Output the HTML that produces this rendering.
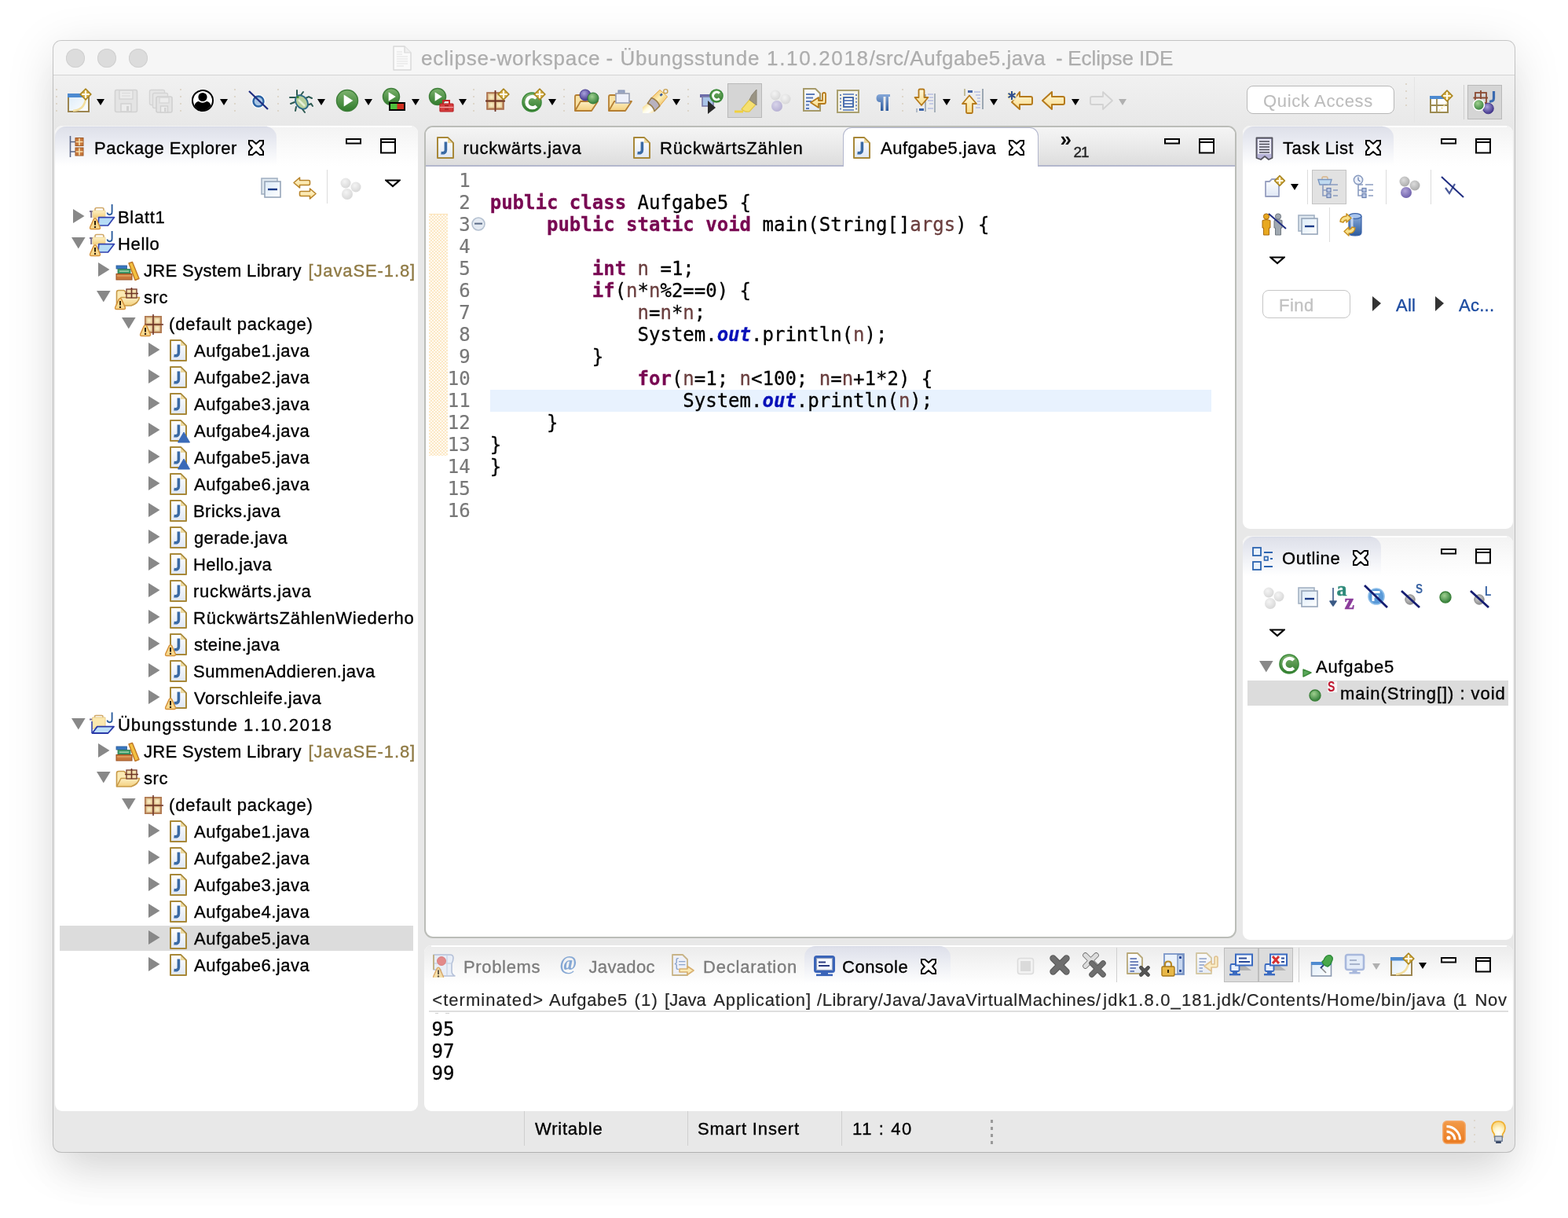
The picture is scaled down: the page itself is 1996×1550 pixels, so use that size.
<!DOCTYPE html>
<html lang="de"><head><meta charset="utf-8"><title>Eclipse IDE</title>
<style>
html,body{margin:0;padding:0;background:#fff;}
body{width:1996px;height:1550px;overflow:hidden;position:relative;font-family:"Liberation Sans",sans-serif;}
#win{position:absolute;left:68px;top:52px;width:1860px;height:1414px;border-radius:10px;background:#e8e8e8;
 box-shadow:0 0 0 1px rgba(0,0,0,.20),0 40px 50px -12px rgba(0,0,0,.065),0 12px 62px rgba(0,0,0,.13);overflow:hidden;}
#pg{position:absolute;left:-68px;top:-52px;width:1996px;height:1550px;will-change:transform;}
#pg div,#pg span,#pg svg{position:absolute;}
.t{white-space:pre;font-family:"Liberation Sans",sans-serif;}
.m{font-family:"DejaVu Sans Mono","Liberation Mono",monospace;}
.cl{font-size:24px;line-height:28px;color:#000;-webkit-text-stroke:0.3px #000;}
.cl b{font-weight:normal;}
.cl .k{font-weight:bold;color:#780852;-webkit-text-stroke-color:#780852;}
.cl .v{color:#6a3e3e;-webkit-text-stroke-color:#6a3e3e;}
.cl .f{font-weight:bold;font-style:italic;color:#0810b8;-webkit-text-stroke-color:#0810b8;}
</style></head>
<body>
<svg width="0" height="0" style="position:absolute"><defs>
<linearGradient id="gGreen" x1="0" y1="0" x2="0" y2="1"><stop offset="0" stop-color="#7db36f"/><stop offset="1" stop-color="#2f7a2b"/></linearGradient>
<linearGradient id="gYel" x1="0" y1="0" x2="0" y2="1"><stop offset="0" stop-color="#fff8dc"/><stop offset="1" stop-color="#f9dc8a"/></linearGradient>
<linearGradient id="gFold" x1="0" y1="0" x2="0" y2="1"><stop offset="0" stop-color="#fdf0c4"/><stop offset="1" stop-color="#f3cf7c"/></linearGradient>
<linearGradient id="gPage" x1="0" y1="0" x2="0" y2="1"><stop offset="0" stop-color="#ffffff"/><stop offset="1" stop-color="#dfe7f5"/></linearGradient>
<linearGradient id="gPkg" x1="0" y1="0" x2="1" y2="1"><stop offset="0" stop-color="#d9b88a"/><stop offset="1" stop-color="#bf8f62"/></linearGradient>
<radialGradient id="gCell" cx="0.5" cy="0.5" r="0.7"><stop offset="0" stop-color="#fbf1c8"/><stop offset="1" stop-color="#e3c795"/></radialGradient>
<linearGradient id="gBlueB" x1="0" y1="0" x2="0" y2="1"><stop offset="0" stop-color="#8f86c8"/><stop offset="1" stop-color="#3d2f86"/></linearGradient>
<linearGradient id="gWin" x1="0" y1="0" x2="1" y2="1"><stop offset="0" stop-color="#dcebf8"/><stop offset="1" stop-color="#ffffff"/></linearGradient>
<linearGradient id="gGray" x1="0" y1="0" x2="0" y2="1"><stop offset="0" stop-color="#f0f0f0"/><stop offset="1" stop-color="#d4d4d4"/></linearGradient>
<linearGradient id="gBlue2" x1="0" y1="0" x2="0" y2="1"><stop offset="0" stop-color="#86a8d8"/><stop offset="1" stop-color="#2c5a9c"/></linearGradient>
<radialGradient id="gBallG" cx="0.4" cy="0.35" r="0.7"><stop offset="0" stop-color="#9fd08f"/><stop offset="1" stop-color="#2d7a35"/></radialGradient>
<radialGradient id="gBallB" cx="0.4" cy="0.35" r="0.7"><stop offset="0" stop-color="#a9a2dc"/><stop offset="1" stop-color="#3a2d85"/></radialGradient>
<radialGradient id="gBallD" cx="0.4" cy="0.35" r="0.7"><stop offset="0" stop-color="#f4f4f4"/><stop offset="1" stop-color="#d6d6d6"/></radialGradient>
<radialGradient id="gBallP" cx="0.4" cy="0.35" r="0.7"><stop offset="0" stop-color="#d8d4ea"/><stop offset="1" stop-color="#b4aed2"/></radialGradient>
<radialGradient id="gBallGr" cx="0.4" cy="0.35" r="0.7"><stop offset="0" stop-color="#d0d0d0"/><stop offset="1" stop-color="#8c8c8c"/></radialGradient>
<radialGradient id="gBallPu" cx="0.4" cy="0.35" r="0.7"><stop offset="0" stop-color="#b0a4d8"/><stop offset="1" stop-color="#6a5ca8"/></radialGradient>
</defs></svg>
<div id="win"><div id="pg">
<div style="left:68px;top:52px;width:1860px;height:44px;background:#f6f6f6;border-bottom:1px solid #d4d4d4;box-sizing:border-box;"></div>
<div style="left:84px;top:62px;width:24px;height:24px;border-radius:50%;background:#dcdcdc;box-shadow:inset 0 0 0 1px #d0d0d0;"></div>
<div style="left:124px;top:62px;width:24px;height:24px;border-radius:50%;background:#dcdcdc;box-shadow:inset 0 0 0 1px #d0d0d0;"></div>
<div style="left:164px;top:62px;width:24px;height:24px;border-radius:50%;background:#dcdcdc;box-shadow:inset 0 0 0 1px #d0d0d0;"></div>
<svg style="left:500px;top:58px;" width="24" height="32" viewBox="0 0 24 32"><path d="M1 1H15L23 9V31H1Z" fill="#fafafa" stroke="#d8d8d8" stroke-width="1.4" stroke-linejoin="round"/><path d="M15 1V9H23" fill="#f0f0f0" stroke="#d8d8d8" stroke-width="1.2"/><path d="M5 8H12M5 11H12M5 14H19M5 17H19M5 20H19M5 23H19M5 26H14" stroke="#e2e2e2" stroke-width="1.2"/></svg>
<span class="t" style="left:536.00px;top:58px;font-size:26px;line-height:32px;color:#adadad;letter-spacing:0.850px;-webkit-text-stroke:0.25px #adadad;">eclipse-workspace </span>
<span class="t" style="left:771.60px;top:58px;font-size:26px;line-height:32px;color:#adadad;-webkit-text-stroke:0.25px #adadad;">- </span>
<span class="t" style="left:789.40px;top:58px;font-size:26px;line-height:32px;color:#adadad;letter-spacing:0.853px;-webkit-text-stroke:0.25px #adadad;">Übungsstunde </span>
<span class="t" style="left:976.00px;top:58px;font-size:26px;line-height:32px;color:#adadad;letter-spacing:1.674px;-webkit-text-stroke:0.25px #adadad;">1.10.2018</span>
<span class="t" style="left:1106.70px;top:58px;font-size:26px;line-height:32px;color:#adadad;letter-spacing:0.512px;-webkit-text-stroke:0.25px #adadad;">/src/Aufgabe5.java </span>
<span class="t" style="left:1344.00px;top:58px;font-size:26px;line-height:32px;color:#adadad;-webkit-text-stroke:0.25px #adadad;">- </span>
<span class="t" style="left:1359.30px;top:58px;font-size:26px;line-height:32px;color:#adadad;letter-spacing:-0.034px;-webkit-text-stroke:0.25px #adadad;">Eclipse IDE</span>
<div style="left:68px;top:96px;width:1860px;height:64px;background:linear-gradient(#f1f1f1,#e8e8e8);"></div>
<div style="left:71px;top:113px;width:2px;height:2px;background:#ddd6ca;"></div>
<div style="left:71px;top:122px;width:2px;height:2px;background:#ddd6ca;"></div>
<div style="left:71px;top:131px;width:2px;height:2px;background:#ddd6ca;"></div>
<div style="left:71px;top:140px;width:2px;height:2px;background:#ddd6ca;"></div>
<div style="left:229px;top:113px;width:2px;height:2px;background:#ddd6ca;"></div>
<div style="left:229px;top:122px;width:2px;height:2px;background:#ddd6ca;"></div>
<div style="left:229px;top:131px;width:2px;height:2px;background:#ddd6ca;"></div>
<div style="left:229px;top:140px;width:2px;height:2px;background:#ddd6ca;"></div>
<div style="left:298px;top:113px;width:2px;height:2px;background:#ddd6ca;"></div>
<div style="left:298px;top:122px;width:2px;height:2px;background:#ddd6ca;"></div>
<div style="left:298px;top:131px;width:2px;height:2px;background:#ddd6ca;"></div>
<div style="left:298px;top:140px;width:2px;height:2px;background:#ddd6ca;"></div>
<div style="left:353px;top:113px;width:2px;height:2px;background:#ddd6ca;"></div>
<div style="left:353px;top:122px;width:2px;height:2px;background:#ddd6ca;"></div>
<div style="left:353px;top:131px;width:2px;height:2px;background:#ddd6ca;"></div>
<div style="left:353px;top:140px;width:2px;height:2px;background:#ddd6ca;"></div>
<div style="left:602px;top:113px;width:2px;height:2px;background:#ddd6ca;"></div>
<div style="left:602px;top:122px;width:2px;height:2px;background:#ddd6ca;"></div>
<div style="left:602px;top:131px;width:2px;height:2px;background:#ddd6ca;"></div>
<div style="left:602px;top:140px;width:2px;height:2px;background:#ddd6ca;"></div>
<div style="left:717px;top:113px;width:2px;height:2px;background:#ddd6ca;"></div>
<div style="left:717px;top:122px;width:2px;height:2px;background:#ddd6ca;"></div>
<div style="left:717px;top:131px;width:2px;height:2px;background:#ddd6ca;"></div>
<div style="left:717px;top:140px;width:2px;height:2px;background:#ddd6ca;"></div>
<div style="left:875px;top:113px;width:2px;height:2px;background:#ddd6ca;"></div>
<div style="left:875px;top:122px;width:2px;height:2px;background:#ddd6ca;"></div>
<div style="left:875px;top:131px;width:2px;height:2px;background:#ddd6ca;"></div>
<div style="left:875px;top:140px;width:2px;height:2px;background:#ddd6ca;"></div>
<div style="left:1148px;top:113px;width:2px;height:2px;background:#ddd6ca;"></div>
<div style="left:1148px;top:122px;width:2px;height:2px;background:#ddd6ca;"></div>
<div style="left:1148px;top:131px;width:2px;height:2px;background:#ddd6ca;"></div>
<div style="left:1148px;top:140px;width:2px;height:2px;background:#ddd6ca;"></div>
<div style="left:1789px;top:106px;width:2px;height:2px;background:#ddd6ca;"></div>
<div style="left:1789px;top:115px;width:2px;height:2px;background:#ddd6ca;"></div>
<div style="left:1789px;top:124px;width:2px;height:2px;background:#ddd6ca;"></div>
<div style="left:1789px;top:133px;width:2px;height:2px;background:#ddd6ca;"></div>
<div style="left:926px;top:106px;width:44px;height:44px;background:#d5d5d5;border:1.5px solid #b9b9b9;box-sizing:border-box;"></div>
<div style="left:1868px;top:108px;width:44px;height:44px;background:#d5d5d5;border:1.5px solid #b9b9b9;box-sizing:border-box;"></div>
<div style="left:1800px;top:98px;width:1px;height:58px;background:#e5e5e5;"></div>
<div style="left:1863px;top:108px;width:1px;height:44px;background:#cfcfcf;"></div>
<svg style="left:85px;top:112px;overflow:visible;" width="32" height="32" viewBox="0 0 32 32"><rect x="2" y="8" width="26" height="22" fill="url(#gWin)" stroke="#9c8550" stroke-width="2"/><rect x="1" y="7" width="22" height="5" fill="#4d8ad0"/><path d="M8 29Q22 28 24 14" fill="none" stroke="#f3dfa0" stroke-width="2.5"/><path d="M24 1L31 8L24 15L17 8Z" fill="#d2ab45" stroke="#a8841f" stroke-width="1.4" stroke-linejoin="round"/><path d="M24 4V12M20 8H28" stroke="#fffbe8" stroke-width="2.2" stroke-linecap="round"/></svg>
<svg style="left:145px;top:112px;overflow:visible;" width="32" height="32" viewBox="0 0 32 32"><rect x="1.5" y="2.5" width="28" height="28" rx="2" fill="#e4e4e4" stroke="#d2d2d2" stroke-width="1.6"/><rect x="7" y="3" width="17" height="11" fill="#ebebeb" stroke="#d4d4d4" stroke-width="1.4"/><path d="M10 6.5H21M10 10H21" stroke="#dadada" stroke-width="1.2"/><rect x="9" y="20" width="13" height="10" fill="#ececec" stroke="#d0d0d0" stroke-width="1.4"/><rect x="16" y="23" width="3" height="6" fill="#d2d2d2"/></svg>
<svg style="left:189px;top:112px;overflow:visible;" width="32" height="32" viewBox="0 0 32 32"><rect x="1.5" y="2.5" width="19" height="19" rx="2" fill="#e6e6e6" stroke="#d4d4d4" stroke-width="1.4"/><rect x="5.5" y="6.5" width="19" height="19" rx="2" fill="#e6e6e6" stroke="#d4d4d4" stroke-width="1.4"/><rect x="10" y="11" width="20" height="20" rx="2" fill="#e4e4e4" stroke="#d0d0d0" stroke-width="1.6"/><rect x="14" y="12" width="12" height="7" fill="#ececec" stroke="#d6d6d6" stroke-width="1.2"/><rect x="15.5" y="23" width="9" height="8" fill="#ececec" stroke="#d0d0d0" stroke-width="1.4"/><rect x="20" y="25" width="2.5" height="5" fill="#d2d2d2"/></svg>
<svg style="left:242px;top:112px;overflow:visible;" width="32" height="32" viewBox="0 0 32 32"><circle cx="16" cy="16" r="13" fill="#fff" stroke="#000" stroke-width="2"/><circle cx="16" cy="11.5" r="5.6" fill="#000"/><path d="M5.5 22.5Q6.5 17.5 11 17Q16 20.5 21 17Q25.5 17.5 26.5 22.5Q22 28.5 16 28.5Q10 28.5 5.5 22.5Z" fill="#000"/></svg>
<svg style="left:312px;top:112px;overflow:visible;" width="32" height="32" viewBox="0 0 32 32"><circle cx="17" cy="17" r="6.5" fill="#a9c6e4" stroke="#fff" stroke-width="5"/><circle cx="17" cy="17" r="6.5" fill="#a9c6e4" stroke="#2b63a4" stroke-width="2.4"/><path d="M5 4L29 27" stroke="#1f2c80" stroke-width="2.2"/></svg>
<svg style="left:367px;top:112px;overflow:visible;" width="32" height="32" viewBox="0 0 32 32"><g stroke="#2d5a52" stroke-width="2" fill="none" stroke-linecap="round"><path d="M11 3V9M19 5L16 9M2 12H9M3 20L8 18M10 24L9 29M18 27L21 31M24 22L29 20L31 23M22 13L26 11L30 13"/></g><ellipse cx="17" cy="18" rx="7" ry="9.5" transform="rotate(-38 17 18)" fill="#b7cf9c" stroke="#2d6a86" stroke-width="2"/><path d="M13 15L21 23" stroke="#e6efd8" stroke-width="2.5"/><circle cx="12" cy="11.5" r="1.6" fill="#3f8a2c"/></svg>
<svg style="left:426px;top:112px;overflow:visible;" width="32" height="32" viewBox="0 0 32 32"><circle cx="16" cy="16" r="13.5" fill="url(#gGreen)" stroke="#3f7f3a" stroke-width="1.5"/><path d="M11.7 8.6L23.4 16L11.7 23.4Z" fill="#fff"/></svg>
<svg style="left:485px;top:112px;overflow:visible;" width="32" height="32" viewBox="0 0 32 32"><circle cx="13" cy="11" r="10.5" fill="url(#gGreen)" stroke="#3f7f3a" stroke-width="1.5"/><path d="M9.6 5.2L18.8 11L9.6 16.8Z" fill="#fff"/><rect x="11" y="19" width="19" height="9" fill="#d03020" stroke="#000" stroke-width="2"/><rect x="12" y="20" width="8.5" height="7" fill="#4fc03c"/></svg>
<svg style="left:546px;top:112px;overflow:visible;" width="32" height="32" viewBox="0 0 32 32"><circle cx="11" cy="11" r="10.5" fill="url(#gGreen)" stroke="#3f7f3a" stroke-width="1.5"/><path d="M7.6 5.2L16.8 11L7.6 16.8Z" fill="#fff"/><rect x="18" y="16" width="8" height="5" fill="none" stroke="#c4282a" stroke-width="2"/><rect x="14" y="20" width="17" height="10" rx="1" fill="#d43c3c" stroke="#b81f24" stroke-width="1.2"/><path d="M14 24.5H31" stroke="#f2a0a0" stroke-width="1.4"/><path d="M20 22.5H25M20 27H25" stroke="#8f1418" stroke-width="1.2"/></svg>
<svg style="left:617px;top:112px;overflow:visible;" width="32" height="32" viewBox="0 0 32 32"><rect x="3" y="6" width="21" height="21" fill="url(#gPkg)" stroke="#a86b48" stroke-width="1.6"/><rect x="5" y="8" width="7" height="7" fill="url(#gCell)"/><rect x="15" y="8" width="7" height="7" fill="url(#gCell)"/><rect x="5" y="18" width="7" height="7" fill="url(#gCell)"/><rect x="15" y="18" width="7" height="7" fill="url(#gCell)"/><path d="M13.5 3V30M1 16.5H26" stroke="#6e3424" stroke-width="1.8"/><path d="M24 1L31 8L24 15L17 8Z" fill="#d2ab45" stroke="#a8841f" stroke-width="1.4" stroke-linejoin="round"/><path d="M24 4V12M20 8H28" stroke="#fffbe8" stroke-width="2.2" stroke-linecap="round"/></svg>
<svg style="left:663px;top:112px;overflow:visible;" width="32" height="32" viewBox="0 0 32 32"><circle cx="14" cy="18" r="12" fill="url(#gGreen)" stroke="#3c8a3a" stroke-width="1.6"/><path d="M19.8 13.0A7.2 7.2 0 1 0 19.8 23.0" fill="none" stroke="#fff" stroke-width="4.3"/><path d="M24 1L31 8L24 15L17 8Z" fill="#d2ab45" stroke="#a8841f" stroke-width="1.4" stroke-linejoin="round"/><path d="M24 4V12M20 8H28" stroke="#fffbe8" stroke-width="2.2" stroke-linecap="round"/></svg>
<svg style="left:730px;top:112px;overflow:visible;" width="32" height="32" viewBox="0 0 32 32"><g transform="translate(0 0)"><path d="M2 29V11Q2 9 4 9H10L13 12H24V17" fill="#f8e2a4" stroke="#b57f32" stroke-width="1.8" stroke-linejoin="round"/><path d="M2 29L9 17H31L23 29Z" fill="url(#gFold)" stroke="#b57f32" stroke-width="1.8" stroke-linejoin="round"/></g><circle cx="15" cy="9" r="7" fill="url(#gBallB)" stroke="#4a3f96" stroke-width="1"/><circle cx="25" cy="13" r="7" fill="url(#gBallG)" stroke="#2f7a35" stroke-width="1"/></svg>
<svg style="left:773px;top:112px;overflow:visible;" width="32" height="32" viewBox="0 0 32 32"><g transform="translate(0 0)"><path d="M2 29V11Q2 9 4 9H10L13 12H24V17" fill="#f8e2a4" stroke="#b57f32" stroke-width="1.8" stroke-linejoin="round"/><path d="M2 29L9 17H31L23 29Z" fill="url(#gFold)" stroke="#b57f32" stroke-width="1.8" stroke-linejoin="round"/></g><rect x="14" y="3" width="8" height="5" fill="#9aa6c4" stroke="#8290b4" stroke-width="1"/><rect x="11" y="7" width="17" height="12" fill="#eef0fa" stroke="#9aa0b4" stroke-width="1.6"/></svg>
<svg style="left:818px;top:112px;overflow:visible;" width="32" height="32" viewBox="0 0 32 32"><defs><linearGradient id="gBeam" x1="0" y1="0" x2="1" y2="1"><stop offset="0" stop-color="#f3c860"/><stop offset="0.45" stop-color="#fffbe0"/><stop offset="0.7" stop-color="#ffffff"/><stop offset="1" stop-color="#f6d880"/></linearGradient><linearGradient id="gTorch" x1="0" y1="0" x2="1" y2="1"><stop offset="0" stop-color="#eeb048"/><stop offset="0.5" stop-color="#fdf0b8"/><stop offset="1" stop-color="#e8a840"/></linearGradient></defs><circle cx="29.3" cy="4.2" r="2.6" fill="none" stroke="#c8a050" stroke-width="1.4"/><path d="M0 24.5L6.4 19.5L15.1 29.5L11.5 32H0Z" fill="url(#gBeam)"/><path d="M11.2 12.6L22 2.4L31.6 11L21.8 22.9Z" fill="url(#gTorch)" stroke="#e4a848" stroke-width="1"/><path d="M6.4 19.5L11.2 12.6Q18.5 15 21.8 22.9L15.1 29.5Q13.5 22.5 6.4 19.5Z" fill="#b8b2c0" stroke="#9a7c48" stroke-width="1.6" stroke-linejoin="round"/><path d="M22.4 9.8L25 7.6" stroke="#3a5a9a" stroke-width="2.6"/></svg>
<svg style="left:889px;top:112px;overflow:visible;" width="32" height="32" viewBox="0 0 32 32"><rect x="2" y="8" width="16" height="4" fill="#6a6aa8"/><rect x="5" y="11" width="14" height="12" fill="#a9c4e8" stroke="#7a7aa8" stroke-width="1.6"/><path d="M12 16L22 25L12 33Z" fill="#2a2a2a"/><circle cx="23" cy="10" r="8" fill="url(#gGreen)" stroke="#3c8a3a" stroke-width="1.6"/><path d="M26.8 6.6A4.8 4.8 0 1 0 26.8 13.4" fill="none" stroke="#fff" stroke-width="2.9"/></svg>
<svg style="left:932px;top:112px;overflow:visible;" width="32" height="32" viewBox="0 0 32 32"><path d="M3 30H14" stroke="#f0d040" stroke-width="3"/><path d="M12 27L22 15L30 21L22 30Q16 31 12 27Z" fill="#f6e070" stroke="#e4c848" stroke-width="1.2"/><path d="M22 15L25 9L31 2V22L30 21Z" fill="#9a9484" stroke="#8a8474" stroke-width="1"/></svg>
<svg style="left:976px;top:112px;overflow:visible;" width="32" height="32" viewBox="0 0 32 32"><circle cx="11" cy="9" r="6.5" fill="url(#gBallD)"/><circle cx="24" cy="14" r="6.5" fill="url(#gBallD)"/><circle cx="13" cy="23" r="7" fill="url(#gBallP)"/></svg>
<svg style="left:1021px;top:112px;overflow:visible;" width="32" height="32" viewBox="0 0 32 32"><path d="M2 1H17L23 7V29H2Z" fill="url(#gPage)" stroke="#a69a6a" stroke-width="2"/><path d="M5 8H16M5 12.5H14M5 17H12M5 21.5H9M5 26H9" stroke="#5a7ab8" stroke-width="1.8"/><path d="M28 6Q30 6 30 8V18Q30 20 28 20H21V25L11 18.5L21 12V16H26V8Q26 6 28 6Z" fill="url(#gYel)" stroke="#b57a1c" stroke-width="1.8" stroke-linejoin="round"/></svg>
<svg style="left:1064px;top:112px;overflow:visible;" width="32" height="32" viewBox="0 0 32 32"><rect x="2" y="3" width="27" height="28" fill="#f6f4ea" stroke="#aaa070" stroke-width="2"/><path d="M6 8V28M26 8V28" stroke="#5a7ab8" stroke-width="1.8" stroke-dasharray="2 2.4"/><path d="M9 8H23M9 28H23" stroke="#7a96c8" stroke-width="1.8"/><rect x="10" y="12" width="12" height="12" fill="#fff" stroke="#3a62a8" stroke-width="1.8"/><path d="M11 16H21M11 20H21" stroke="#3a62a8" stroke-width="1.6"/></svg>
<svg style="left:1110px;top:112px;overflow:visible;" width="32" height="32" viewBox="0 0 32 32"><path d="M17 8H10.5Q5.5 8 5.5 13Q5.5 18 10.5 18H11V29H14.5V11H17.5V29H21V11H23V8Z" fill="url(#gBlue2)"/></svg>
<svg style="left:1164px;top:112px;overflow:visible;" width="32" height="32" viewBox="0 0 32 32"><path d="M14 8V30M26 7V31" stroke="#7a8a9a" stroke-width="1.2"/><path d="M17 8H24M19 12H24M17 16H24M19 20H24M17 26H24" stroke="#c4cae4" stroke-width="2"/><rect x="6" y="26" width="6" height="3" fill="#3a62a8"/><path d="M3 26V31" stroke="#8a9ab0" stroke-width="1.2"/><path d="M5.5 3Q5.5 1.5 7 1.5H11Q12.5 1.5 12.5 3V12H17.5L9 22L0.5 12H5.5Z" fill="url(#gYel)" stroke="#b57a1c" stroke-width="1.8" stroke-linejoin="round"/></svg>
<svg style="left:1223.5px;top:112px;overflow:visible;" width="32" height="32" viewBox="0 0 32 32"><path d="M4 1V10" stroke="#b0a878" stroke-width="1.4"/><path d="M27 1V27" stroke="#7a8a9a" stroke-width="1.4"/><rect x="8" y="3" width="6" height="3" fill="#4a68a8"/><path d="M16 5H24M18 9H24M20 13H24M20 17H24M20 21H24M18 25H24" stroke="#c4cae4" stroke-width="2"/><path d="M6 30Q6 32 7.5 32H12.5Q14 32 14 30V20H19L10 9.5L1 20H6Z" fill="url(#gYel)" stroke="#b57a1c" stroke-width="1.8" stroke-linejoin="round"/></svg>
<svg style="left:1282px;top:112px;overflow:visible;" width="32" height="32" viewBox="0 0 32 32"><g transform="translate(4 5)"><path d="M2 13L12 0V6H26Q28 6 28 8V14Q28 16 26 16H12V22Z" fill="url(#gYel)" stroke="#b57a1c" stroke-width="2" stroke-linejoin="round"/></g><circle cx="6" cy="10" r="6" fill="#f4ecc8"/><path d="M6 4V15M1.5 6.8L10.5 12.2M10.5 6.8L1.5 12.2" stroke="#2f4f8f" stroke-width="2"/></svg>
<svg style="left:1325px;top:112px;overflow:visible;" width="32" height="32" viewBox="0 0 32 32"><g transform="translate(2 5)"><path d="M0 11L12 0V6H26Q28 6 28 8V14Q28 16 26 16H12V22Z" fill="url(#gYel)" stroke="#b57a1c" stroke-width="2" stroke-linejoin="round"/></g></svg>
<svg style="left:1386px;top:112px;overflow:visible;" width="32" height="32" viewBox="0 0 32 32"><g transform="translate(30 5) scale(-1 1)"><path d="M0 11L12 0V6H26Q28 6 28 8V14Q28 16 26 16H12V22Z" fill="#ececec" stroke="#d2d2d2" stroke-width="1.8" stroke-linejoin="round"/></g></svg>
<svg style="left:1818px;top:114px;overflow:visible;" width="32" height="32" viewBox="0 0 32 32"><rect x="3" y="9" width="22" height="20" fill="#fff" stroke="#9c8a50" stroke-width="2"/><rect x="2" y="8" width="20" height="4" fill="#4d8ad0"/><path d="M11 12V29M3 20H25" stroke="#9c8a50" stroke-width="1.8"/><path d="M14 27L24 17" stroke="#f3dfa0" stroke-width="2" stroke-dasharray="2 2"/><path d="M24 1L31 8L24 15L17 8Z" fill="#d2ab45" stroke="#a8841f" stroke-width="1.4" stroke-linejoin="round"/><path d="M24 4V12M20 8H28" stroke="#fffbe8" stroke-width="2.2" stroke-linecap="round"/></svg>
<svg style="left:1874px;top:114px;overflow:visible;" width="32" height="32" viewBox="0 0 32 32"><g stroke="#8a4a32" stroke-width="1.8" fill="none"><rect x="4" y="4" width="14" height="13"/><path d="M11 1V18M1.5 10.5H20"/></g><path d="M27.5 2V11Q27.5 15.5 22 15" fill="none" stroke="#3a6ab0" stroke-width="3.2"/><circle cx="20.5" cy="24" r="6.8" fill="url(#gBallB)" stroke="#3a2d85" stroke-width="0.8"/><circle cx="8.5" cy="19.5" r="7" fill="url(#gBallG)" stroke="#fff" stroke-width="1.6"/></svg>
<svg style="left:123px;top:126px;" width="10" height="8" viewBox="0 0 10 8"><path d="M0 0H10L5 8Z" fill="#000"/></svg>
<svg style="left:280px;top:126px;" width="10" height="8" viewBox="0 0 10 8"><path d="M0 0H10L5 8Z" fill="#000"/></svg>
<svg style="left:404px;top:126px;" width="10" height="8" viewBox="0 0 10 8"><path d="M0 0H10L5 8Z" fill="#000"/></svg>
<svg style="left:464px;top:126px;" width="10" height="8" viewBox="0 0 10 8"><path d="M0 0H10L5 8Z" fill="#000"/></svg>
<svg style="left:524px;top:126px;" width="10" height="8" viewBox="0 0 10 8"><path d="M0 0H10L5 8Z" fill="#000"/></svg>
<svg style="left:584px;top:126px;" width="10" height="8" viewBox="0 0 10 8"><path d="M0 0H10L5 8Z" fill="#000"/></svg>
<svg style="left:698px;top:126px;" width="10" height="8" viewBox="0 0 10 8"><path d="M0 0H10L5 8Z" fill="#000"/></svg>
<svg style="left:856px;top:126px;" width="10" height="8" viewBox="0 0 10 8"><path d="M0 0H10L5 8Z" fill="#000"/></svg>
<svg style="left:1200px;top:126px;" width="10" height="8" viewBox="0 0 10 8"><path d="M0 0H10L5 8Z" fill="#000"/></svg>
<svg style="left:1260px;top:126px;" width="10" height="8" viewBox="0 0 10 8"><path d="M0 0H10L5 8Z" fill="#000"/></svg>
<svg style="left:1364px;top:126px;" width="10" height="8" viewBox="0 0 10 8"><path d="M0 0H10L5 8Z" fill="#000"/></svg>
<svg style="left:1424px;top:126px;" width="10" height="8" viewBox="0 0 10 8"><path d="M0 0H10L5 8Z" fill="#b0b0b0"/></svg>
<div style="left:1587px;top:109px;width:188px;height:36px;background:#fff;border:1.5px solid #b8b8b8;border-radius:8px;box-sizing:border-box;"></div>
<span class="t" style="left:1608.00px;top:115px;font-size:22px;line-height:28px;color:#bcbcbc;letter-spacing:0.658px;-webkit-text-stroke:0.1px #bcbcbc;">Quick Access</span>
<div style="left:70px;top:160px;width:462px;height:1254px;background:#fff;border-radius:9px;"></div>
<div style="left:70px;top:160px;width:462px;height:52px;border-radius:9px 9px 0 0;background:linear-gradient(#f3f3f3,#fbfbfb 60%,#fff);"></div>
<div style="left:340px;top:160px;width:184px;height:2px;background:#fff;"></div>
<div style="left:70px;top:161px;width:282px;height:50px;border-radius:14px 14px 0 0;background:linear-gradient(#d6d9e6 0,#dfe1ea 2px,#e5e7ef 25%,#f5f6f9 70%,#ffffff 100%);"></div>
<svg style="left:88px;top:173px;overflow:visible;" width="20" height="28" viewBox="0 0 20 28"><path d="M1.5 0V27M1.5 7.5H8M1.5 20H8" stroke="#5a6484" stroke-width="1.6" fill="none"/><rect x="8" y="2.5" width="10" height="10" fill="#c8783c" stroke="#a05a28" stroke-width="1"/><path d="M13 3V12M8.5 7.5H17.5" stroke="#f6e0b0" stroke-width="1.6"/><rect x="8" y="15" width="10" height="10" fill="#c8783c" stroke="#a05a28" stroke-width="1"/><path d="M13 15.5V24.5M8.5 20H17.5" stroke="#f6e0b0" stroke-width="1.6"/></svg>
<span class="t" style="left:120.00px;top:175px;font-size:22px;line-height:28px;color:#000;letter-spacing:0.512px;-webkit-text-stroke:0.35px #000;">Package Explorer</span>
<svg style="left:316px;top:178px;" width="20" height="20" viewBox="0 0 20 20"><path d="M1 1H5.4L10 4.9L14.6 1H19V5.4L15.1 10L19 14.6V19H14.6L10 15.1L5.4 19H1V14.6L4.9 10L1 5.4Z" fill="#fff" stroke="#000" stroke-width="2" stroke-linejoin="miter"/></svg>
<svg style="left:440px;top:176px;" width="20" height="8" viewBox="0 0 20 8"><rect x="1" y="1" width="18" height="5.5" fill="#fff" stroke="#000" stroke-width="2"/></svg>
<svg style="left:484px;top:176px;" width="20" height="20" viewBox="0 0 20 20"><rect x="1" y="1" width="18" height="17.5" fill="#fff" stroke="#000" stroke-width="2"/><path d="M1 5H19" stroke="#000" stroke-width="2"/></svg>
<svg style="left:332px;top:226px;" width="26" height="26" viewBox="0 0 26 26"><rect x="1" y="1" width="20" height="20" fill="#dfe8f0" stroke="#a4b2c4" stroke-width="1.6"/><rect x="5" y="5" width="20" height="20" fill="url(#gWin)" stroke="#96a6ba" stroke-width="1.6"/><path d="M9 15H21" stroke="#1c3c88" stroke-width="2.4"/></svg>
<svg style="left:373px;top:225px;overflow:visible;" width="30" height="29" viewBox="0 0 30 29"><path d="M0 6.5L7.5 0V3.5H19Q20.5 3.5 20.5 5V8Q20.5 9.5 19 9.5H7.5V13Z" transform="translate(1 1)" fill="url(#gYel)" stroke="#b8842a" stroke-width="1.6" stroke-linejoin="round"/><path d="M0 6.5L7.5 0V3.5H19Q20.5 3.5 20.5 5V8Q20.5 9.5 19 9.5H7.5V13Z" transform="translate(29.0 15) scale(-1 1)" fill="url(#gYel)" stroke="#b8842a" stroke-width="1.6" stroke-linejoin="round"/></svg>
<div style="left:416px;top:216px;width:1px;height:43px;background:#dcdcdc;"></div>
<svg style="left:429px;top:224px;overflow:visible;" width="32" height="32" viewBox="0 0 32 32"><circle cx="11" cy="9" r="6.5" fill="url(#gBallD)"/><circle cx="24" cy="14" r="6.5" fill="url(#gBallD)"/><circle cx="13" cy="23" r="7" fill="url(#gBallD)"/></svg>
<svg style="left:490px;top:228px;" width="20" height="11" viewBox="0 0 20 11"><path d="M1.5 1.5H18.5L10 9Z" fill="#fff" stroke="#000" stroke-width="2.2" stroke-linejoin="miter"/></svg>
<div style="left:76px;top:1178px;width:450px;height:32px;background:#dcdcdc;"></div>
<div style="left:70px;top:256px;width:457px;height:1000px;overflow:hidden;">
<svg style="left:23px;top:10px;" width="15" height="18" viewBox="0 0 15 18"><path d="M0 0L14.5 9L0 18Z" fill="#888"/></svg>
<svg style="left:44px;top:4px;overflow:visible;" width="32" height="32" viewBox="0 0 32 32"><path d="M0 9H5M2.2 9V17" stroke="#7a7090" stroke-width="2" fill="none"/><path d="M7 8V6.5Q7 4.5 9 4.5H16Q18 4.5 18 6.5V8" fill="none" stroke="#d0a868" stroke-width="1.6"/><path d="M4 8H20V17H4Z" fill="url(#gFold)" stroke="#ecd494" stroke-width="0.8"/><path d="M28.6 0V9.5Q28.6 13.2 25.5 13.2Q22.8 13.2 22.6 10.5" fill="none" stroke="#2c5e9e" stroke-width="1.9"/><path d="M11.7 16.6H31.5L23.5 27H11Z" fill="#b6dcf6" stroke="#3242b0" stroke-width="1.7" stroke-linejoin="round"/><g transform="translate(0 16.5)"><path d="M7 1.2Q8.2 1.2 8.8 2.6L13.3 12.6Q14 15 11.8 15H2.2Q0 15 0.7 12.6L5.2 2.6Q5.8 1.2 7 1.2Z" fill="#f8d98e" stroke="#d4913a" stroke-width="1.4" stroke-linejoin="round"/><path d="M7 4.6V10" stroke="#2a1a08" stroke-width="2"/><circle cx="7" cy="12.4" r="1.2" fill="#2a1a08"/></g></svg>
<span class="t" style="left:80.00px;top:7px;font-size:22px;line-height:28px;color:#000;letter-spacing:0.696px;-webkit-text-stroke:0.35px #000;">Blatt1</span>
<svg style="left:21.2px;top:46px;" width="18" height="15" viewBox="0 0 18 15"><path d="M0 0H17.6L8.8 14.5Z" fill="#888"/></svg>
<svg style="left:44px;top:38px;overflow:visible;" width="32" height="32" viewBox="0 0 32 32"><path d="M0 9H5M2.2 9V17" stroke="#7a7090" stroke-width="2" fill="none"/><path d="M7 8V6.5Q7 4.5 9 4.5H16Q18 4.5 18 6.5V8" fill="none" stroke="#d0a868" stroke-width="1.6"/><path d="M4 8H20V17H4Z" fill="url(#gFold)" stroke="#ecd494" stroke-width="0.8"/><path d="M28.6 0V9.5Q28.6 13.2 25.5 13.2Q22.8 13.2 22.6 10.5" fill="none" stroke="#2c5e9e" stroke-width="1.9"/><path d="M11.7 16.6H31.5L23.5 27H11Z" fill="#b6dcf6" stroke="#3242b0" stroke-width="1.7" stroke-linejoin="round"/><g transform="translate(0 16.5)"><path d="M7 1.2Q8.2 1.2 8.8 2.6L13.3 12.6Q14 15 11.8 15H2.2Q0 15 0.7 12.6L5.2 2.6Q5.8 1.2 7 1.2Z" fill="#f8d98e" stroke="#d4913a" stroke-width="1.4" stroke-linejoin="round"/><path d="M7 4.6V10" stroke="#2a1a08" stroke-width="2"/><circle cx="7" cy="12.4" r="1.2" fill="#2a1a08"/></g></svg>
<span class="t" style="left:80.00px;top:41px;font-size:22px;line-height:28px;color:#000;letter-spacing:0.650px;-webkit-text-stroke:0.35px #000;">Hello</span>
<svg style="left:55px;top:78px;" width="15" height="18" viewBox="0 0 15 18"><path d="M0 0L14.5 9L0 18Z" fill="#888"/></svg>
<svg style="left:76px;top:72px;overflow:visible;" width="32" height="32" viewBox="0 0 32 32"><rect x="2" y="10" width="13.5" height="4" fill="#3a78c0" stroke="#2a5a98" stroke-width="0.8"/><rect x="4" y="14.5" width="16" height="5.5" fill="#3f9a6a" stroke="#2e7a50" stroke-width="0.8"/><path d="M6 17.2H18" stroke="#9ad0a8" stroke-width="1.6"/><rect x="2" y="20.5" width="20" height="7.5" fill="#c8783c" stroke="#9a5020" stroke-width="1"/><path d="M3 23H21" stroke="#e0a060" stroke-width="1.6"/><path d="M18 7L22.5 5.5L31 26.5L26 28.5Z" fill="#f2c040" stroke="#c07828" stroke-width="1.4" stroke-linejoin="round"/></svg>
<span class="t" style="left:113.00px;top:75px;font-size:22px;line-height:28px;color:#000;letter-spacing:0.360px;-webkit-text-stroke:0.35px #000;">JRE System Library</span>
<span class="t" style="left:322.50px;top:75px;font-size:22px;line-height:28px;color:#8f7a44;letter-spacing:0.878px;-webkit-text-stroke:0.35px #8f7a44;">[JavaSE-1.8]</span>
<svg style="left:53.2px;top:114px;" width="18" height="15" viewBox="0 0 18 15"><path d="M0 0H17.6L8.8 14.5Z" fill="#888"/></svg>
<svg style="left:76px;top:106px;overflow:visible;" width="32" height="32" viewBox="0 0 32 32"><path d="M2.5 27V10Q2.5 7.5 5 7.5H12L14 10H20V17" fill="#fbeab4" stroke="#c89a48" stroke-width="1.6" stroke-linejoin="round"/><path d="M2.5 27L8 16.5H31.5Q30 24 21 27Z" fill="url(#gFold)" stroke="#c89a48" stroke-width="1.6" stroke-linejoin="round"/><rect x="15" y="6" width="13" height="11" fill="#f2dfae" stroke="#7a4030" stroke-width="1.4"/><path d="M21.5 4V17M13 11.5H30" stroke="#6e3424" stroke-width="1.6"/><g transform="translate(0 16.5)"><path d="M7 1.2Q8.2 1.2 8.8 2.6L13.3 12.6Q14 15 11.8 15H2.2Q0 15 0.7 12.6L5.2 2.6Q5.8 1.2 7 1.2Z" fill="#f8d98e" stroke="#d4913a" stroke-width="1.4" stroke-linejoin="round"/><path d="M7 4.6V10" stroke="#2a1a08" stroke-width="2"/><circle cx="7" cy="12.4" r="1.2" fill="#2a1a08"/></g></svg>
<span class="t" style="left:113.00px;top:109px;font-size:22px;line-height:28px;color:#000;letter-spacing:0.587px;-webkit-text-stroke:0.35px #000;">src</span>
<svg style="left:85.2px;top:148px;" width="18" height="15" viewBox="0 0 18 15"><path d="M0 0H17.6L8.8 14.5Z" fill="#888"/></svg>
<svg style="left:108px;top:140px;overflow:visible;" width="32" height="32" viewBox="0 0 32 32"><rect x="6.8" y="6.8" width="20.4" height="20.4" fill="url(#gPkg)" stroke="#b07850" stroke-width="1.6"/><rect x="8.5" y="8.5" width="7" height="7" fill="url(#gCell)"/><rect x="18.5" y="8.5" width="7" height="7" fill="url(#gCell)"/><rect x="8.5" y="18.5" width="7" height="7" fill="url(#gCell)"/><rect x="18.5" y="18.5" width="7" height="7" fill="url(#gCell)"/><path d="M17 4V30M6 17H30" stroke="#6a3024" stroke-width="1.5"/><g transform="translate(0 16.5)"><path d="M7 1.2Q8.2 1.2 8.8 2.6L13.3 12.6Q14 15 11.8 15H2.2Q0 15 0.7 12.6L5.2 2.6Q5.8 1.2 7 1.2Z" fill="#f8d98e" stroke="#d4913a" stroke-width="1.4" stroke-linejoin="round"/><path d="M7 4.6V10" stroke="#2a1a08" stroke-width="2"/><circle cx="7" cy="12.4" r="1.2" fill="#2a1a08"/></g></svg>
<span class="t" style="left:145.00px;top:143px;font-size:22px;line-height:28px;color:#000;letter-spacing:0.802px;-webkit-text-stroke:0.35px #000;">(default package)</span>
<svg style="left:119px;top:180px;" width="15" height="18" viewBox="0 0 15 18"><path d="M0 0L14.5 9L0 18Z" fill="#888"/></svg>
<svg style="left:146px;top:176px;overflow:visible;" width="22" height="28" viewBox="0 0 22 28"><path d="M1 1H14L21 8V27H1Z" fill="url(#gPage)" stroke="#a88838" stroke-width="2" stroke-linejoin="round"/><path d="M14 2L20 8H14Z" fill="#ecd9a0"/><path d="M11.4 6.5V17Q11.4 21.5 5.5 20.6" fill="none" stroke="#3a6aa4" stroke-width="3.6"/></svg>
<span class="t" style="left:177.00px;top:177px;font-size:22px;line-height:28px;color:#000;letter-spacing:0.506px;-webkit-text-stroke:0.35px #000;">Aufgabe1.java</span>
<svg style="left:119px;top:214px;" width="15" height="18" viewBox="0 0 15 18"><path d="M0 0L14.5 9L0 18Z" fill="#888"/></svg>
<svg style="left:146px;top:210px;overflow:visible;" width="22" height="28" viewBox="0 0 22 28"><path d="M1 1H14L21 8V27H1Z" fill="url(#gPage)" stroke="#a88838" stroke-width="2" stroke-linejoin="round"/><path d="M14 2L20 8H14Z" fill="#ecd9a0"/><path d="M11.4 6.5V17Q11.4 21.5 5.5 20.6" fill="none" stroke="#3a6aa4" stroke-width="3.6"/></svg>
<span class="t" style="left:177.00px;top:211px;font-size:22px;line-height:28px;color:#000;letter-spacing:0.506px;-webkit-text-stroke:0.35px #000;">Aufgabe2.java</span>
<svg style="left:119px;top:248px;" width="15" height="18" viewBox="0 0 15 18"><path d="M0 0L14.5 9L0 18Z" fill="#888"/></svg>
<svg style="left:146px;top:244px;overflow:visible;" width="22" height="28" viewBox="0 0 22 28"><path d="M1 1H14L21 8V27H1Z" fill="url(#gPage)" stroke="#a88838" stroke-width="2" stroke-linejoin="round"/><path d="M14 2L20 8H14Z" fill="#ecd9a0"/><path d="M11.4 6.5V17Q11.4 21.5 5.5 20.6" fill="none" stroke="#3a6aa4" stroke-width="3.6"/></svg>
<span class="t" style="left:177.00px;top:245px;font-size:22px;line-height:28px;color:#000;letter-spacing:0.506px;-webkit-text-stroke:0.35px #000;">Aufgabe3.java</span>
<svg style="left:119px;top:282px;" width="15" height="18" viewBox="0 0 15 18"><path d="M0 0L14.5 9L0 18Z" fill="#888"/></svg>
<svg style="left:146px;top:278px;overflow:visible;" width="22" height="28" viewBox="0 0 22 28"><path d="M1 1H14L21 8V27H1Z" fill="url(#gPage)" stroke="#a88838" stroke-width="2" stroke-linejoin="round"/><path d="M14 2L20 8H14Z" fill="#ecd9a0"/><path d="M11.4 6.5V17Q11.4 21.5 5.5 20.6" fill="none" stroke="#3a6aa4" stroke-width="3.6"/><path d="M10.5 29L18 16L25.5 29Z" fill="#3a6ab8" stroke="#3a6ab8" stroke-width="1" stroke-linejoin="round"/></svg>
<span class="t" style="left:177.00px;top:279px;font-size:22px;line-height:28px;color:#000;letter-spacing:0.506px;-webkit-text-stroke:0.35px #000;">Aufgabe4.java</span>
<svg style="left:119px;top:316px;" width="15" height="18" viewBox="0 0 15 18"><path d="M0 0L14.5 9L0 18Z" fill="#888"/></svg>
<svg style="left:146px;top:312px;overflow:visible;" width="22" height="28" viewBox="0 0 22 28"><path d="M1 1H14L21 8V27H1Z" fill="url(#gPage)" stroke="#a88838" stroke-width="2" stroke-linejoin="round"/><path d="M14 2L20 8H14Z" fill="#ecd9a0"/><path d="M11.4 6.5V17Q11.4 21.5 5.5 20.6" fill="none" stroke="#3a6aa4" stroke-width="3.6"/><path d="M10.5 29L18 16L25.5 29Z" fill="#3a6ab8" stroke="#3a6ab8" stroke-width="1" stroke-linejoin="round"/></svg>
<span class="t" style="left:177.00px;top:313px;font-size:22px;line-height:28px;color:#000;letter-spacing:0.506px;-webkit-text-stroke:0.35px #000;">Aufgabe5.java</span>
<svg style="left:119px;top:350px;" width="15" height="18" viewBox="0 0 15 18"><path d="M0 0L14.5 9L0 18Z" fill="#888"/></svg>
<svg style="left:146px;top:346px;overflow:visible;" width="22" height="28" viewBox="0 0 22 28"><path d="M1 1H14L21 8V27H1Z" fill="url(#gPage)" stroke="#a88838" stroke-width="2" stroke-linejoin="round"/><path d="M14 2L20 8H14Z" fill="#ecd9a0"/><path d="M11.4 6.5V17Q11.4 21.5 5.5 20.6" fill="none" stroke="#3a6aa4" stroke-width="3.6"/></svg>
<span class="t" style="left:177.00px;top:347px;font-size:22px;line-height:28px;color:#000;letter-spacing:0.506px;-webkit-text-stroke:0.35px #000;">Aufgabe6.java</span>
<svg style="left:119px;top:384px;" width="15" height="18" viewBox="0 0 15 18"><path d="M0 0L14.5 9L0 18Z" fill="#888"/></svg>
<svg style="left:146px;top:380px;overflow:visible;" width="22" height="28" viewBox="0 0 22 28"><path d="M1 1H14L21 8V27H1Z" fill="url(#gPage)" stroke="#a88838" stroke-width="2" stroke-linejoin="round"/><path d="M14 2L20 8H14Z" fill="#ecd9a0"/><path d="M11.4 6.5V17Q11.4 21.5 5.5 20.6" fill="none" stroke="#3a6aa4" stroke-width="3.6"/></svg>
<span class="t" style="left:176.00px;top:381px;font-size:22px;line-height:28px;color:#000;letter-spacing:0.438px;-webkit-text-stroke:0.35px #000;">Bricks.java</span>
<svg style="left:119px;top:418px;" width="15" height="18" viewBox="0 0 15 18"><path d="M0 0L14.5 9L0 18Z" fill="#888"/></svg>
<svg style="left:146px;top:414px;overflow:visible;" width="22" height="28" viewBox="0 0 22 28"><path d="M1 1H14L21 8V27H1Z" fill="url(#gPage)" stroke="#a88838" stroke-width="2" stroke-linejoin="round"/><path d="M14 2L20 8H14Z" fill="#ecd9a0"/><path d="M11.4 6.5V17Q11.4 21.5 5.5 20.6" fill="none" stroke="#3a6aa4" stroke-width="3.6"/></svg>
<span class="t" style="left:177.00px;top:415px;font-size:22px;line-height:28px;color:#000;letter-spacing:0.376px;-webkit-text-stroke:0.35px #000;">gerade.java</span>
<svg style="left:119px;top:452px;" width="15" height="18" viewBox="0 0 15 18"><path d="M0 0L14.5 9L0 18Z" fill="#888"/></svg>
<svg style="left:146px;top:448px;overflow:visible;" width="22" height="28" viewBox="0 0 22 28"><path d="M1 1H14L21 8V27H1Z" fill="url(#gPage)" stroke="#a88838" stroke-width="2" stroke-linejoin="round"/><path d="M14 2L20 8H14Z" fill="#ecd9a0"/><path d="M11.4 6.5V17Q11.4 21.5 5.5 20.6" fill="none" stroke="#3a6aa4" stroke-width="3.6"/></svg>
<span class="t" style="left:176.00px;top:449px;font-size:22px;line-height:28px;color:#000;letter-spacing:0.348px;-webkit-text-stroke:0.35px #000;">Hello.java</span>
<svg style="left:119px;top:486px;" width="15" height="18" viewBox="0 0 15 18"><path d="M0 0L14.5 9L0 18Z" fill="#888"/></svg>
<svg style="left:146px;top:482px;overflow:visible;" width="22" height="28" viewBox="0 0 22 28"><path d="M1 1H14L21 8V27H1Z" fill="url(#gPage)" stroke="#a88838" stroke-width="2" stroke-linejoin="round"/><path d="M14 2L20 8H14Z" fill="#ecd9a0"/><path d="M11.4 6.5V17Q11.4 21.5 5.5 20.6" fill="none" stroke="#3a6aa4" stroke-width="3.6"/></svg>
<span class="t" style="left:176.00px;top:483px;font-size:22px;line-height:28px;color:#000;letter-spacing:0.703px;-webkit-text-stroke:0.35px #000;">ruckwärts.java</span>
<svg style="left:119px;top:520px;" width="15" height="18" viewBox="0 0 15 18"><path d="M0 0L14.5 9L0 18Z" fill="#888"/></svg>
<svg style="left:146px;top:516px;overflow:visible;" width="22" height="28" viewBox="0 0 22 28"><path d="M1 1H14L21 8V27H1Z" fill="url(#gPage)" stroke="#a88838" stroke-width="2" stroke-linejoin="round"/><path d="M14 2L20 8H14Z" fill="#ecd9a0"/><path d="M11.4 6.5V17Q11.4 21.5 5.5 20.6" fill="none" stroke="#3a6aa4" stroke-width="3.6"/></svg>
<span class="t" style="left:176.00px;top:517px;font-size:22px;line-height:28px;color:#000;letter-spacing:0.756px;-webkit-text-stroke:0.35px #000;">RückwärtsZählenWiederho</span>
<svg style="left:119px;top:554px;" width="15" height="18" viewBox="0 0 15 18"><path d="M0 0L14.5 9L0 18Z" fill="#888"/></svg>
<svg style="left:146px;top:550px;overflow:visible;" width="22" height="28" viewBox="0 0 22 28"><path d="M1 1H14L21 8V27H1Z" fill="url(#gPage)" stroke="#a88838" stroke-width="2" stroke-linejoin="round"/><path d="M14 2L20 8H14Z" fill="#ecd9a0"/><path d="M11.4 6.5V17Q11.4 21.5 5.5 20.6" fill="none" stroke="#3a6aa4" stroke-width="3.6"/><rect x="-6" y="12" width="8" height="16" fill="#fff" opacity="0"/><g transform="translate(-6 13.5)"><path d="M7 1.2Q8.2 1.2 8.8 2.6L13.3 12.6Q14 15 11.8 15H2.2Q0 15 0.7 12.6L5.2 2.6Q5.8 1.2 7 1.2Z" fill="#f8d98e" stroke="#d4913a" stroke-width="1.4" stroke-linejoin="round"/><path d="M7 4.6V10" stroke="#2a1a08" stroke-width="2"/><circle cx="7" cy="12.4" r="1.2" fill="#2a1a08"/></g></svg>
<span class="t" style="left:177.00px;top:551px;font-size:22px;line-height:28px;color:#000;letter-spacing:0.356px;-webkit-text-stroke:0.35px #000;">steine.java</span>
<svg style="left:119px;top:588px;" width="15" height="18" viewBox="0 0 15 18"><path d="M0 0L14.5 9L0 18Z" fill="#888"/></svg>
<svg style="left:146px;top:584px;overflow:visible;" width="22" height="28" viewBox="0 0 22 28"><path d="M1 1H14L21 8V27H1Z" fill="url(#gPage)" stroke="#a88838" stroke-width="2" stroke-linejoin="round"/><path d="M14 2L20 8H14Z" fill="#ecd9a0"/><path d="M11.4 6.5V17Q11.4 21.5 5.5 20.6" fill="none" stroke="#3a6aa4" stroke-width="3.6"/></svg>
<span class="t" style="left:176.00px;top:585px;font-size:22px;line-height:28px;color:#000;letter-spacing:0.482px;-webkit-text-stroke:0.35px #000;">SummenAddieren.java</span>
<svg style="left:119px;top:622px;" width="15" height="18" viewBox="0 0 15 18"><path d="M0 0L14.5 9L0 18Z" fill="#888"/></svg>
<svg style="left:146px;top:618px;overflow:visible;" width="22" height="28" viewBox="0 0 22 28"><path d="M1 1H14L21 8V27H1Z" fill="url(#gPage)" stroke="#a88838" stroke-width="2" stroke-linejoin="round"/><path d="M14 2L20 8H14Z" fill="#ecd9a0"/><path d="M11.4 6.5V17Q11.4 21.5 5.5 20.6" fill="none" stroke="#3a6aa4" stroke-width="3.6"/><rect x="-6" y="12" width="8" height="16" fill="#fff" opacity="0"/><g transform="translate(-6 13.5)"><path d="M7 1.2Q8.2 1.2 8.8 2.6L13.3 12.6Q14 15 11.8 15H2.2Q0 15 0.7 12.6L5.2 2.6Q5.8 1.2 7 1.2Z" fill="#f8d98e" stroke="#d4913a" stroke-width="1.4" stroke-linejoin="round"/><path d="M7 4.6V10" stroke="#2a1a08" stroke-width="2"/><circle cx="7" cy="12.4" r="1.2" fill="#2a1a08"/></g></svg>
<span class="t" style="left:177.00px;top:619px;font-size:22px;line-height:28px;color:#000;letter-spacing:0.510px;-webkit-text-stroke:0.35px #000;">Vorschleife.java</span>
<svg style="left:21.2px;top:658px;" width="18" height="15" viewBox="0 0 18 15"><path d="M0 0H17.6L8.8 14.5Z" fill="#888"/></svg>
<svg style="left:44px;top:650px;overflow:visible;" width="32" height="32" viewBox="0 0 32 32"><path d="M0 9.5H4" stroke="#7a7090" stroke-width="2"/><path d="M6.5 7V6Q6.5 4.5 8 4.5H15.5Q17 4.5 17 6V7" fill="none" stroke="#d0a868" stroke-width="1.6"/><path d="M3.6 22V7H20V19H9Z" fill="#fbe8ae" stroke="#e8cc88" stroke-width="1"/><path d="M28.6 0.5V9.5Q28.6 13.2 25.5 13.2Q22.8 13.2 22.6 10.5" fill="none" stroke="#2c5e9e" stroke-width="1.9"/><path d="M3 12V27" stroke="#3a4ab0" stroke-width="1.6"/><path d="M3.5 27L9.8 18.6H31L23.5 27Z" fill="#bfe0f8" stroke="#2a3aa8" stroke-width="1.8" stroke-linejoin="round"/></svg>
<span class="t" style="left:80.00px;top:653px;font-size:22px;line-height:28px;color:#000;letter-spacing:0.914px;-webkit-text-stroke:0.35px #000;">Übungsstunde </span>
<span class="t" style="left:240.00px;top:653px;font-size:22px;line-height:28px;color:#000;letter-spacing:1.758px;-webkit-text-stroke:0.35px #000;">1.10.2018</span>
<svg style="left:55px;top:690px;" width="15" height="18" viewBox="0 0 15 18"><path d="M0 0L14.5 9L0 18Z" fill="#888"/></svg>
<svg style="left:76px;top:684px;overflow:visible;" width="32" height="32" viewBox="0 0 32 32"><rect x="2" y="10" width="13.5" height="4" fill="#3a78c0" stroke="#2a5a98" stroke-width="0.8"/><rect x="4" y="14.5" width="16" height="5.5" fill="#3f9a6a" stroke="#2e7a50" stroke-width="0.8"/><path d="M6 17.2H18" stroke="#9ad0a8" stroke-width="1.6"/><rect x="2" y="20.5" width="20" height="7.5" fill="#c8783c" stroke="#9a5020" stroke-width="1"/><path d="M3 23H21" stroke="#e0a060" stroke-width="1.6"/><path d="M18 7L22.5 5.5L31 26.5L26 28.5Z" fill="#f2c040" stroke="#c07828" stroke-width="1.4" stroke-linejoin="round"/></svg>
<span class="t" style="left:113.00px;top:687px;font-size:22px;line-height:28px;color:#000;letter-spacing:0.360px;-webkit-text-stroke:0.35px #000;">JRE System Library</span>
<span class="t" style="left:322.50px;top:687px;font-size:22px;line-height:28px;color:#8f7a44;letter-spacing:0.878px;-webkit-text-stroke:0.35px #8f7a44;">[JavaSE-1.8]</span>
<svg style="left:53.2px;top:726px;" width="18" height="15" viewBox="0 0 18 15"><path d="M0 0H17.6L8.8 14.5Z" fill="#888"/></svg>
<svg style="left:76px;top:718px;overflow:visible;" width="32" height="32" viewBox="0 0 32 32"><path d="M2.5 27V10Q2.5 7.5 5 7.5H12L14 10H20V17" fill="#fbeab4" stroke="#c89a48" stroke-width="1.6" stroke-linejoin="round"/><path d="M2.5 27L8 16.5H31.5Q30 24 21 27Z" fill="url(#gFold)" stroke="#c89a48" stroke-width="1.6" stroke-linejoin="round"/><rect x="15" y="6" width="13" height="11" fill="#f2dfae" stroke="#7a4030" stroke-width="1.4"/><path d="M21.5 4V17M13 11.5H30" stroke="#6e3424" stroke-width="1.6"/></svg>
<span class="t" style="left:113.00px;top:721px;font-size:22px;line-height:28px;color:#000;letter-spacing:0.587px;-webkit-text-stroke:0.35px #000;">src</span>
<svg style="left:85.2px;top:760px;" width="18" height="15" viewBox="0 0 18 15"><path d="M0 0H17.6L8.8 14.5Z" fill="#888"/></svg>
<svg style="left:108px;top:752px;overflow:visible;" width="32" height="32" viewBox="0 0 32 32"><rect x="6.8" y="6.8" width="20.4" height="20.4" fill="url(#gPkg)" stroke="#b07850" stroke-width="1.6"/><rect x="8.5" y="8.5" width="7" height="7" fill="url(#gCell)"/><rect x="18.5" y="8.5" width="7" height="7" fill="url(#gCell)"/><rect x="8.5" y="18.5" width="7" height="7" fill="url(#gCell)"/><rect x="18.5" y="18.5" width="7" height="7" fill="url(#gCell)"/><path d="M17 4V30M6 17H30" stroke="#6a3024" stroke-width="1.5"/></svg>
<span class="t" style="left:145.00px;top:755px;font-size:22px;line-height:28px;color:#000;letter-spacing:0.802px;-webkit-text-stroke:0.35px #000;">(default package)</span>
<svg style="left:119px;top:792px;" width="15" height="18" viewBox="0 0 15 18"><path d="M0 0L14.5 9L0 18Z" fill="#888"/></svg>
<svg style="left:146px;top:788px;overflow:visible;" width="22" height="28" viewBox="0 0 22 28"><path d="M1 1H14L21 8V27H1Z" fill="url(#gPage)" stroke="#a88838" stroke-width="2" stroke-linejoin="round"/><path d="M14 2L20 8H14Z" fill="#ecd9a0"/><path d="M11.4 6.5V17Q11.4 21.5 5.5 20.6" fill="none" stroke="#3a6aa4" stroke-width="3.6"/></svg>
<span class="t" style="left:177.00px;top:789px;font-size:22px;line-height:28px;color:#000;letter-spacing:0.506px;-webkit-text-stroke:0.35px #000;">Aufgabe1.java</span>
<svg style="left:119px;top:826px;" width="15" height="18" viewBox="0 0 15 18"><path d="M0 0L14.5 9L0 18Z" fill="#888"/></svg>
<svg style="left:146px;top:822px;overflow:visible;" width="22" height="28" viewBox="0 0 22 28"><path d="M1 1H14L21 8V27H1Z" fill="url(#gPage)" stroke="#a88838" stroke-width="2" stroke-linejoin="round"/><path d="M14 2L20 8H14Z" fill="#ecd9a0"/><path d="M11.4 6.5V17Q11.4 21.5 5.5 20.6" fill="none" stroke="#3a6aa4" stroke-width="3.6"/></svg>
<span class="t" style="left:177.00px;top:823px;font-size:22px;line-height:28px;color:#000;letter-spacing:0.506px;-webkit-text-stroke:0.35px #000;">Aufgabe2.java</span>
<svg style="left:119px;top:860px;" width="15" height="18" viewBox="0 0 15 18"><path d="M0 0L14.5 9L0 18Z" fill="#888"/></svg>
<svg style="left:146px;top:856px;overflow:visible;" width="22" height="28" viewBox="0 0 22 28"><path d="M1 1H14L21 8V27H1Z" fill="url(#gPage)" stroke="#a88838" stroke-width="2" stroke-linejoin="round"/><path d="M14 2L20 8H14Z" fill="#ecd9a0"/><path d="M11.4 6.5V17Q11.4 21.5 5.5 20.6" fill="none" stroke="#3a6aa4" stroke-width="3.6"/></svg>
<span class="t" style="left:177.00px;top:857px;font-size:22px;line-height:28px;color:#000;letter-spacing:0.506px;-webkit-text-stroke:0.35px #000;">Aufgabe3.java</span>
<svg style="left:119px;top:894px;" width="15" height="18" viewBox="0 0 15 18"><path d="M0 0L14.5 9L0 18Z" fill="#888"/></svg>
<svg style="left:146px;top:890px;overflow:visible;" width="22" height="28" viewBox="0 0 22 28"><path d="M1 1H14L21 8V27H1Z" fill="url(#gPage)" stroke="#a88838" stroke-width="2" stroke-linejoin="round"/><path d="M14 2L20 8H14Z" fill="#ecd9a0"/><path d="M11.4 6.5V17Q11.4 21.5 5.5 20.6" fill="none" stroke="#3a6aa4" stroke-width="3.6"/></svg>
<span class="t" style="left:177.00px;top:891px;font-size:22px;line-height:28px;color:#000;letter-spacing:0.506px;-webkit-text-stroke:0.35px #000;">Aufgabe4.java</span>
<svg style="left:119px;top:928px;" width="15" height="18" viewBox="0 0 15 18"><path d="M0 0L14.5 9L0 18Z" fill="#888"/></svg>
<svg style="left:146px;top:924px;overflow:visible;" width="22" height="28" viewBox="0 0 22 28"><path d="M1 1H14L21 8V27H1Z" fill="url(#gPage)" stroke="#a88838" stroke-width="2" stroke-linejoin="round"/><path d="M14 2L20 8H14Z" fill="#ecd9a0"/><path d="M11.4 6.5V17Q11.4 21.5 5.5 20.6" fill="none" stroke="#3a6aa4" stroke-width="3.6"/></svg>
<span class="t" style="left:177.00px;top:925px;font-size:22px;line-height:28px;color:#000;letter-spacing:0.506px;-webkit-text-stroke:0.35px #000;">Aufgabe5.java</span>
<svg style="left:119px;top:962px;" width="15" height="18" viewBox="0 0 15 18"><path d="M0 0L14.5 9L0 18Z" fill="#888"/></svg>
<svg style="left:146px;top:958px;overflow:visible;" width="22" height="28" viewBox="0 0 22 28"><path d="M1 1H14L21 8V27H1Z" fill="url(#gPage)" stroke="#a88838" stroke-width="2" stroke-linejoin="round"/><path d="M14 2L20 8H14Z" fill="#ecd9a0"/><path d="M11.4 6.5V17Q11.4 21.5 5.5 20.6" fill="none" stroke="#3a6aa4" stroke-width="3.6"/></svg>
<span class="t" style="left:177.00px;top:959px;font-size:22px;line-height:28px;color:#000;letter-spacing:0.506px;-webkit-text-stroke:0.35px #000;">Aufgabe6.java</span>
</div>
<div style="left:540px;top:160px;width:1034px;height:1034px;background:#fff;border:2px solid #bbbdb8;border-radius:11px;box-sizing:border-box;overflow:hidden;"><div style="left:0;top:0;width:1030px;height:48px;background:linear-gradient(#f5f5f5,#ebebeb 45%,#dddddd);"></div><div style="left:0;top:48px;width:1030px;height:2px;background:#b3b7cd;"></div></div>
<div style="left:1073px;top:162px;width:249px;height:50px;background:#fff;border:1.5px solid #b3b7cd;border-bottom:none;border-radius:11px 11px 0 0;box-sizing:border-box;"></div>
<svg style="left:556px;top:174px;" width="22" height="28" viewBox="0 0 22 28"><path d="M1 1H14L21 8V27H1Z" fill="url(#gPage)" stroke="#a88838" stroke-width="2" stroke-linejoin="round"/><path d="M14 2L20 8H14Z" fill="#ecd9a0"/><path d="M11.4 6.5V17Q11.4 21.5 5.5 20.6" fill="none" stroke="#3a6aa4" stroke-width="3.6"/></svg>
<span class="t" style="left:589.50px;top:175px;font-size:22px;line-height:28px;color:#000;letter-spacing:0.742px;-webkit-text-stroke:0.35px #000;">ruckwärts.java</span>
<svg style="left:806px;top:174px;" width="22" height="28" viewBox="0 0 22 28"><path d="M1 1H14L21 8V27H1Z" fill="url(#gPage)" stroke="#a88838" stroke-width="2" stroke-linejoin="round"/><path d="M14 2L20 8H14Z" fill="#ecd9a0"/><path d="M11.4 6.5V17Q11.4 21.5 5.5 20.6" fill="none" stroke="#3a6aa4" stroke-width="3.6"/></svg>
<span class="t" style="left:840.00px;top:175px;font-size:22px;line-height:28px;color:#000;letter-spacing:0.842px;-webkit-text-stroke:0.35px #000;">RückwärtsZählen</span>
<svg style="left:1086px;top:174px;" width="22" height="28" viewBox="0 0 22 28"><path d="M1 1H14L21 8V27H1Z" fill="url(#gPage)" stroke="#a88838" stroke-width="2" stroke-linejoin="round"/><path d="M14 2L20 8H14Z" fill="#ecd9a0"/><path d="M11.4 6.5V17Q11.4 21.5 5.5 20.6" fill="none" stroke="#3a6aa4" stroke-width="3.6"/></svg>
<span class="t" style="left:1121.00px;top:175px;font-size:22px;line-height:28px;color:#000;letter-spacing:0.506px;-webkit-text-stroke:0.35px #000;">Aufgabe5.java</span>
<svg style="left:1284px;top:178px;" width="20" height="20" viewBox="0 0 20 20"><path d="M1 1H5.4L10 4.9L14.6 1H19V5.4L15.1 10L19 14.6V19H14.6L10 15.1L5.4 19H1V14.6L4.9 10L1 5.4Z" fill="#fff" stroke="#000" stroke-width="2" stroke-linejoin="miter"/></svg>
<span class="t" style="left:1349.50px;top:161px;font-size:26px;line-height:32px;color:#111;font-weight:bold;">»</span>
<span class="t" style="left:1366.50px;top:182px;font-size:19px;line-height:24px;color:#222;letter-spacing:-1.067px;-webkit-text-stroke:0.35px #222;">21</span>
<svg style="left:1482px;top:176px;" width="20" height="8" viewBox="0 0 20 8"><rect x="1" y="1" width="18" height="5.5" fill="#fff" stroke="#000" stroke-width="2"/></svg>
<svg style="left:1526px;top:176px;" width="20" height="20" viewBox="0 0 20 20"><rect x="1" y="1" width="18" height="17.5" fill="#fff" stroke="#000" stroke-width="2"/><path d="M1 5H19" stroke="#000" stroke-width="2"/></svg>
<div style="left:546px;top:272px;width:24px;height:308px;background-color:#fff;background-image:repeating-conic-gradient(#fce8c6 0% 25%,#fffaf0 0% 50%);background-size:4px 4px;border-top:1px solid #fbe2b6;box-sizing:border-box;"></div>
<div style="left:624px;top:496px;width:918px;height:28px;background:#e8f2fe;"></div>
<span class="t m" style="left:540px;width:58.6px;text-align:right;top:216px;font-size:24px;line-height:28px;color:#787878;-webkit-text-stroke:0.2px #787878;">1</span>
<span class="t m" style="left:540px;width:58.6px;text-align:right;top:244px;font-size:24px;line-height:28px;color:#787878;-webkit-text-stroke:0.2px #787878;">2</span>
<div class="t m cl" style="left:623.70px;top:244px;"><b class="k">public</b> <b class="k">class</b> Aufgabe5 {</div>
<span class="t m" style="left:540px;width:58.6px;text-align:right;top:272px;font-size:24px;line-height:28px;color:#787878;-webkit-text-stroke:0.2px #787878;">3</span>
<div class="t m cl" style="left:623.70px;top:272px;">     <b class="k">public</b> <b class="k">static</b> <b class="k">void</b> main(String[]<b class="v">args</b>) {</div>
<span class="t m" style="left:540px;width:58.6px;text-align:right;top:300px;font-size:24px;line-height:28px;color:#787878;-webkit-text-stroke:0.2px #787878;">4</span>
<span class="t m" style="left:540px;width:58.6px;text-align:right;top:328px;font-size:24px;line-height:28px;color:#787878;-webkit-text-stroke:0.2px #787878;">5</span>
<div class="t m cl" style="left:623.70px;top:328px;">         <b class="k">int</b> <b class="v">n</b> =1;</div>
<span class="t m" style="left:540px;width:58.6px;text-align:right;top:356px;font-size:24px;line-height:28px;color:#787878;-webkit-text-stroke:0.2px #787878;">6</span>
<div class="t m cl" style="left:623.70px;top:356px;">         <b class="k">if</b>(<b class="v">n</b>*<b class="v">n</b>%2==0) {</div>
<span class="t m" style="left:540px;width:58.6px;text-align:right;top:384px;font-size:24px;line-height:28px;color:#787878;-webkit-text-stroke:0.2px #787878;">7</span>
<div class="t m cl" style="left:623.70px;top:384px;">             <b class="v">n</b>=<b class="v">n</b>*<b class="v">n</b>;</div>
<span class="t m" style="left:540px;width:58.6px;text-align:right;top:412px;font-size:24px;line-height:28px;color:#787878;-webkit-text-stroke:0.2px #787878;">8</span>
<div class="t m cl" style="left:623.70px;top:412px;">             System.<b class="f">out</b>.println(<b class="v">n</b>);</div>
<span class="t m" style="left:540px;width:58.6px;text-align:right;top:440px;font-size:24px;line-height:28px;color:#787878;-webkit-text-stroke:0.2px #787878;">9</span>
<div class="t m cl" style="left:623.70px;top:440px;">         }</div>
<span class="t m" style="left:540px;width:58.6px;text-align:right;top:468px;font-size:24px;line-height:28px;color:#787878;-webkit-text-stroke:0.2px #787878;">10</span>
<div class="t m cl" style="left:623.70px;top:468px;">             <b class="k">for</b>(<b class="v">n</b>=1; <b class="v">n</b>&lt;100; <b class="v">n</b>=<b class="v">n</b>+1*2) {</div>
<span class="t m" style="left:540px;width:58.6px;text-align:right;top:496px;font-size:24px;line-height:28px;color:#787878;-webkit-text-stroke:0.2px #787878;">11</span>
<div class="t m cl" style="left:623.70px;top:496px;">                 System.<b class="f">out</b>.println(<b class="v">n</b>);</div>
<span class="t m" style="left:540px;width:58.6px;text-align:right;top:524px;font-size:24px;line-height:28px;color:#787878;-webkit-text-stroke:0.2px #787878;">12</span>
<div class="t m cl" style="left:623.70px;top:524px;">     }</div>
<span class="t m" style="left:540px;width:58.6px;text-align:right;top:552px;font-size:24px;line-height:28px;color:#787878;-webkit-text-stroke:0.2px #787878;">13</span>
<div class="t m cl" style="left:623.70px;top:552px;">}</div>
<span class="t m" style="left:540px;width:58.6px;text-align:right;top:580px;font-size:24px;line-height:28px;color:#787878;-webkit-text-stroke:0.2px #787878;">14</span>
<div class="t m cl" style="left:623.70px;top:580px;">}</div>
<span class="t m" style="left:540px;width:58.6px;text-align:right;top:608px;font-size:24px;line-height:28px;color:#787878;-webkit-text-stroke:0.2px #787878;">15</span>
<span class="t m" style="left:540px;width:58.6px;text-align:right;top:636px;font-size:24px;line-height:28px;color:#787878;-webkit-text-stroke:0.2px #787878;">16</span>
<svg style="left:600px;top:276px;" width="18" height="18" viewBox="0 0 18 18"><circle cx="9" cy="9" r="8" fill="#e4eaf2" stroke="#b4c0d0" stroke-width="1.6"/><path d="M4 8.6H14" stroke="#5a6a86" stroke-width="2"/></svg>
<div style="left:1582px;top:160px;width:344px;height:513px;background:#fff;border-radius:9px;"></div>
<div style="left:1582px;top:160px;width:344px;height:52px;border-radius:9px 9px 0 0;background:linear-gradient(#f3f3f3,#fbfbfb 60%,#fff);"></div>
<div style="left:1760px;top:160px;width:158px;height:2px;background:#fff;"></div>
<div style="left:1582px;top:161px;width:192px;height:50px;border-radius:14px 14px 0 0;background:linear-gradient(#d6d9e6 0,#dfe1ea 2px,#e5e7ef 25%,#f5f6f9 70%,#ffffff 100%);"></div>
<svg style="left:1598px;top:174px;" width="23" height="30" viewBox="0 0 23 30"><path d="M1.5 1.5H21.5V27L17 29L12 25L7 29L1.5 27Z" fill="#b7b4d8" stroke="#55555f" stroke-width="1.8" stroke-linejoin="round"/><rect x="3" y="3" width="17" height="19" fill="#e8e8f4"/><path d="M5 6H18M5 9.5H18M5 13H18M5 16.5H18M5 20H18" stroke="#4a4a55" stroke-width="1.5"/></svg>
<span class="t" style="left:1633.00px;top:175px;font-size:22px;line-height:28px;color:#000;letter-spacing:0.504px;-webkit-text-stroke:0.35px #000;">Task List</span>
<svg style="left:1738px;top:178px;" width="20" height="20" viewBox="0 0 20 20"><path d="M1 1H5.4L10 4.9L14.6 1H19V5.4L15.1 10L19 14.6V19H14.6L10 15.1L5.4 19H1V14.6L4.9 10L1 5.4Z" fill="#fff" stroke="#000" stroke-width="2" stroke-linejoin="miter"/></svg>
<svg style="left:1834px;top:176px;" width="20" height="8" viewBox="0 0 20 8"><rect x="1" y="1" width="18" height="5.5" fill="#fff" stroke="#000" stroke-width="2"/></svg>
<svg style="left:1878px;top:176px;" width="20" height="20" viewBox="0 0 20 20"><rect x="1" y="1" width="18" height="17.5" fill="#fff" stroke="#000" stroke-width="2"/><path d="M1 5H19" stroke="#000" stroke-width="2"/></svg>
<div style="left:1670px;top:216px;width:44px;height:44px;background:#e2e2e2;border:1.5px solid #c4c4c4;box-sizing:border-box;"></div>
<div style="left:1664px;top:216px;width:1px;height:44px;background:#dcdcdc;"></div>
<div style="left:1764px;top:216px;width:1px;height:44px;background:#dcdcdc;"></div>
<div style="left:1821px;top:216px;width:1px;height:44px;background:#dcdcdc;"></div>
<div style="left:1692px;top:264px;width:1px;height:44px;background:#dcdcdc;"></div>
<svg style="left:1608px;top:222px;overflow:visible;" width="30" height="32" viewBox="0 0 30 32"><path d="M3 9H8L11 6H20V28H3Z" fill="url(#gPage)" stroke="#98a0c0" stroke-width="1.8" stroke-linejoin="round"/><path d="M21 1.5L27.5 8L21 14.5L14.5 8Z" fill="#d2ab45" stroke="#a8841f" stroke-width="1.4" stroke-linejoin="round"/><path d="M21 4.5V11.5M17.5 8H24.5" stroke="#fffbe8" stroke-width="2.2" stroke-linecap="round"/></svg>
<svg style="left:1643px;top:234px;" width="10" height="8" viewBox="0 0 10 8"><path d="M0 0H10L5 8Z" fill="#000"/></svg>
<svg style="left:1676px;top:222px;" width="32" height="32" viewBox="0 0 32 32"><path d="M7 6V4.5Q7 3 8.5 3H12.5Q14 3 14 4.5V6" fill="none" stroke="#d8b488" stroke-width="1.4"/><path d="M2 6.5H19L17 13H4Z" fill="#c0daf0" stroke="#7a96c0" stroke-width="1.4"/><path d="M8 13V27H14M8 20H14M8 13H14" fill="none" stroke="#8a9cc0" stroke-width="1.6"/><rect x="13" y="17.5" width="5" height="5" fill="#b8c6e4" stroke="#6a80b0" stroke-width="1.2"/><rect x="13" y="24.5" width="5" height="5" fill="#b8c6e4" stroke="#6a80b0" stroke-width="1.2"/><path d="M17 13H27M21 20H27M21 27H27" stroke="#8a9cc0" stroke-width="1.6"/></svg>
<svg style="left:1721px;top:222px;" width="32" height="32" viewBox="0 0 32 32"><circle cx="8" cy="7" r="5.6" fill="#eef2fa" stroke="#8a9cc0" stroke-width="1.6"/><path d="M8 3.5V7L10.5 9" fill="none" stroke="#6a80b0" stroke-width="1.3"/><path d="M8 13V27H14M8 20H14M8 13H14" fill="none" stroke="#8a9cc0" stroke-width="1.6"/><rect x="13" y="17.5" width="5" height="5" fill="#b8c6e4" stroke="#6a80b0" stroke-width="1.2"/><rect x="13" y="24.5" width="5" height="5" fill="#b8c6e4" stroke="#6a80b0" stroke-width="1.2"/><path d="M17 13H27M21 20H27M21 27H27" stroke="#8a9cc0" stroke-width="1.6"/></svg>
<svg style="left:1777px;top:222px;overflow:visible;" width="32" height="32" viewBox="0 0 32 32"><circle cx="11" cy="9" r="6.5" fill="url(#gBallGr)" opacity="0.75"/><circle cx="24" cy="14" r="6.5" fill="url(#gBallGr)" opacity="0.75"/><circle cx="13" cy="23" r="7" fill="url(#gBallPu)"/></svg>
<svg style="left:1833px;top:222px;" width="32" height="32" viewBox="0 0 32 32"><path d="M7 17L12 24L19 12" fill="none" stroke="#4a5a9a" stroke-width="2.2"/><path d="M2 3L30 29" stroke="#1f2c80" stroke-width="2"/></svg>
<svg style="left:1603px;top:271px;overflow:visible;" width="36" height="30" viewBox="0 0 36 30"><circle cx="9" cy="4.5" r="3.6" fill="#e8a820" stroke="#a86a10" stroke-width="1"/><path d="M4 9.5Q9 7.5 14 9.5V19H12.5V28H5.5V19H4Z" fill="#e8a820" stroke="#a86a10" stroke-width="1" stroke-linejoin="round"/><circle cx="24" cy="4.5" r="3.6" fill="#a0a8b0" stroke="#707880" stroke-width="1"/><path d="M19 9.5Q24 7.5 29 9.5V19H27.5V28H20.5V19H19Z" fill="#a0a8b0" stroke="#707880" stroke-width="1" stroke-linejoin="round"/><path d="M12 1L34 20" stroke="#1f2c80" stroke-width="2"/></svg>
<svg style="left:1652px;top:273px;" width="26" height="26" viewBox="0 0 26 26"><rect x="1" y="1" width="20" height="20" fill="#dfe8f0" stroke="#a4b2c4" stroke-width="1.6"/><rect x="5" y="5" width="20" height="20" fill="url(#gWin)" stroke="#96a6ba" stroke-width="1.6"/><path d="M9 15H21" stroke="#1c3c88" stroke-width="2.4"/></svg>
<svg style="left:1703px;top:270px;" width="32" height="32" viewBox="0 0 32 32"><path d="M14 5V26Q14 30 22 30Q30 30 30 26V5" fill="url(#gBlue2)" stroke="#3a62a8" stroke-width="1.2"/><ellipse cx="22" cy="5" rx="8" ry="3.4" fill="#a8c4ec" stroke="#3a62a8" stroke-width="1.2"/><path d="M18 6V25" stroke="#dce8fa" stroke-width="3" opacity="0.8"/><path d="M3 12Q4 5 11 5V2L17 7.5L11 13V10Q8 10 7 13Z" fill="#f8e08a" stroke="#c89020" stroke-width="1.4" stroke-linejoin="round"/><path d="M22 20Q21 27 14 27V30L8 24.5L14 19V22Q17 22 18 19Z" fill="#f8e08a" stroke="#c89020" stroke-width="1.4" stroke-linejoin="round"/></svg>
<svg style="left:1616px;top:326px;" width="20" height="11" viewBox="0 0 20 11"><path d="M1.5 1.5H18.5L10 9Z" fill="#fff" stroke="#000" stroke-width="2.2" stroke-linejoin="miter"/></svg>
<div style="left:1607px;top:369px;width:112px;height:36px;background:#fff;border:1.5px solid #c6c6c6;border-radius:8px;box-sizing:border-box;"></div>
<span class="t" style="left:1628.00px;top:375px;font-size:22px;line-height:28px;color:#c2c2c2;letter-spacing:0.479px;-webkit-text-stroke:0.35px #c2c2c2;">Find</span>
<svg style="left:1747px;top:377px;" width="11" height="19" viewBox="0 0 11 19"><path d="M0 0L11 9L0 19Z" fill="#333"/></svg>
<span class="t" style="left:1777.00px;top:375px;font-size:22px;line-height:28px;color:#1c4ba0;letter-spacing:0.219px;-webkit-text-stroke:0.35px #1c4ba0;">All</span>
<svg style="left:1827px;top:377px;" width="11" height="19" viewBox="0 0 11 19"><path d="M0 0L11 9L0 19Z" fill="#333"/></svg>
<span class="t" style="left:1857.00px;top:375px;font-size:22px;line-height:28px;color:#1c4ba0;letter-spacing:0.275px;-webkit-text-stroke:0.35px #1c4ba0;">Ac...</span>
<div style="left:1582px;top:682px;width:344px;height:514px;background:#fff;border-radius:9px;"></div>
<div style="left:1582px;top:682px;width:344px;height:52px;border-radius:9px 9px 0 0;background:linear-gradient(#f3f3f3,#fbfbfb 60%,#fff);"></div>
<div style="left:1745px;top:682px;width:173px;height:2px;background:#fff;"></div>
<div style="left:1582px;top:683px;width:176px;height:50px;border-radius:14px 14px 0 0;background:linear-gradient(#d6d9e6 0,#dfe1ea 2px,#e5e7ef 25%,#f5f6f9 70%,#ffffff 100%);"></div>
<svg style="left:1594px;top:696px;" width="28" height="30" viewBox="0 0 28 30"><rect x="1" y="1" width="10" height="10" fill="#eaf2fc" stroke="#2c64b0" stroke-width="1.8"/><rect x="1" y="19" width="10" height="10" fill="#eaf2fc" stroke="#2c64b0" stroke-width="1.8"/><path d="M15 7H26M15 25H26M23 15H26" stroke="#2c64b0" stroke-width="1.8"/><rect x="15.5" y="12.5" width="4.5" height="4.5" fill="#eaf2fc" stroke="#2c64b0" stroke-width="1.6"/></svg>
<span class="t" style="left:1632.00px;top:697px;font-size:22px;line-height:28px;color:#000;letter-spacing:0.672px;-webkit-text-stroke:0.35px #000;">Outline</span>
<svg style="left:1722px;top:700px;" width="20" height="20" viewBox="0 0 20 20"><path d="M1 1H5.4L10 4.9L14.6 1H19V5.4L15.1 10L19 14.6V19H14.6L10 15.1L5.4 19H1V14.6L4.9 10L1 5.4Z" fill="#fff" stroke="#000" stroke-width="2" stroke-linejoin="miter"/></svg>
<svg style="left:1834px;top:698px;" width="20" height="8" viewBox="0 0 20 8"><rect x="1" y="1" width="18" height="5.5" fill="#fff" stroke="#000" stroke-width="2"/></svg>
<svg style="left:1878px;top:698px;" width="20" height="20" viewBox="0 0 20 20"><rect x="1" y="1" width="18" height="17.5" fill="#fff" stroke="#000" stroke-width="2"/><path d="M1 5H19" stroke="#000" stroke-width="2"/></svg>
<svg style="left:1603.5px;top:745px;overflow:visible;" width="32" height="32" viewBox="0 0 32 32"><circle cx="11" cy="9" r="6.5" fill="url(#gBallD)"/><circle cx="24" cy="14" r="6.5" fill="url(#gBallD)"/><circle cx="13" cy="23" r="7" fill="url(#gBallD)"/></svg>
<svg style="left:1652px;top:747px;" width="26" height="26" viewBox="0 0 26 26"><rect x="1" y="1" width="20" height="20" fill="#dfe8f0" stroke="#a4b2c4" stroke-width="1.6"/><rect x="5" y="5" width="20" height="20" fill="url(#gWin)" stroke="#96a6ba" stroke-width="1.6"/><path d="M9 15H21" stroke="#1c3c88" stroke-width="2.4"/></svg>
<svg style="left:1692px;top:744px;overflow:visible;" width="32" height="32" viewBox="0 0 32 32"><path d="M5 4V25M1 21L5 27L9 21Z" fill="#3a5a86" stroke="#3a5a86" stroke-width="1.6" stroke-linejoin="round"/></svg>
<span class="t" style="left:1701.5px;top:738px;font-size:26px;line-height:24px;font-weight:bold;color:#2e8a7a;-webkit-text-stroke:0.5px #2e8a7a;font-family:'Liberation Serif',serif;">a</span>
<span class="t" style="left:1711.5px;top:753px;font-size:28px;line-height:26px;font-weight:bold;color:#8a3a9a;font-family:'Liberation Serif',serif;-webkit-text-stroke:0.5px #8a3a9a;">z</span>
<svg style="left:1736px;top:744px;" width="32" height="32" viewBox="0 0 32 32"><circle cx="16" cy="15" r="10" fill="#5a9ad8" stroke="#8abce8" stroke-width="1.6"/><path d="M12 21V9.5H20.5M12 15H18.5" fill="none" stroke="#fff" stroke-width="3"/><path d="M1 1L30 29" stroke="#141c70" stroke-width="2.8"/></svg>
<svg style="left:1783px;top:744px;" width="32" height="32" viewBox="0 0 32 32"><circle cx="12" cy="19" r="6.2" fill="url(#gBallGr)" stroke="#8a8a8a" stroke-width="1"/><path d="M1 8L24 29" stroke="#141c70" stroke-width="2.8"/></svg>
<span class="t" style="left:1801.5px;top:740.5px;font-size:17px;line-height:18px;font-weight:bold;color:#3a64a4;transform:scaleX(.8);transform-origin:0 0;">S</span>
<svg style="left:1832px;top:752px;" width="16" height="16" viewBox="0 0 16 16"><circle cx="8" cy="8" r="7" fill="url(#gBallG)" stroke="#3a8038" stroke-width="1.4"/></svg>
<svg style="left:1871px;top:744px;" width="32" height="32" viewBox="0 0 32 32"><circle cx="12" cy="19" r="6.2" fill="url(#gBallGr)" stroke="#8a8a8a" stroke-width="1"/><path d="M1 8L24 29" stroke="#141c70" stroke-width="2.8"/></svg>
<span class="t" style="left:1890px;top:744px;font-size:16px;line-height:18px;font-weight:bold;color:#3a64a4;transform:scaleX(.85);transform-origin:0 0;">L</span>
<svg style="left:1616px;top:800px;" width="20" height="11" viewBox="0 0 20 11"><path d="M1.5 1.5H18.5L10 9Z" fill="#fff" stroke="#000" stroke-width="2.2" stroke-linejoin="miter"/></svg>
<svg style="left:1602.8px;top:840.6px;" width="18" height="15" viewBox="0 0 18 15"><path d="M0 0H17.6L8.8 14.5Z" fill="#888"/></svg>
<svg style="left:1627px;top:831px;" width="28" height="28" viewBox="0 0 28 28"><circle cx="14" cy="14" r="12" fill="url(#gGreen)" stroke="#3c8a3a" stroke-width="1.6"/><path d="M19.8 9.0A7.2 7.2 0 1 0 19.8 19.0" fill="none" stroke="#fff" stroke-width="4.3"/></svg>
<svg style="left:1657.5px;top:851.2px;" width="12" height="11" viewBox="0 0 12 11"><path d="M1 1L11 5L1 10Z" fill="#5aa85a" stroke="#3c8a3a" stroke-width="1.4" stroke-linejoin="round"/></svg>
<span class="t" style="left:1675.00px;top:835px;font-size:22px;line-height:28px;color:#000;letter-spacing:0.720px;-webkit-text-stroke:0.35px #000;">Aufgabe5</span>
<div style="left:1588px;top:866px;width:332px;height:32px;background:#dcdcdc;"></div>
<svg style="left:1666px;top:876.6px;" width="16" height="16" viewBox="0 0 16 16"><circle cx="8" cy="8" r="7" fill="url(#gBallG)" stroke="#3a8038" stroke-width="1.4"/></svg>
<div style="left:1690px;top:866.5px;width:12px;height:14px;background:#f6f6f6;"></div>
<span class="t" style="left:1690.3px;top:864.5px;font-size:18px;line-height:18px;font-weight:bold;color:#c01830;transform:scaleX(.78);transform-origin:0 0;">S</span>
<span class="t" style="left:1706.00px;top:869px;font-size:22px;line-height:28px;color:#000;letter-spacing:0.950px;-webkit-text-stroke:0.35px #000;">main(String[]) : void</span>
<div style="left:540px;top:1203px;width:1386px;height:211px;background:#fff;border-radius:9px;"></div>
<div style="left:540px;top:1203px;width:1386px;height:50px;border-radius:9px 9px 0 0;background:linear-gradient(#ebebeb,#f6f6f6 55%,#fff);"></div>
<div style="left:549px;top:1203px;width:1369px;height:2px;background:#fff;"></div>
<div style="left:1024px;top:1204px;width:186px;height:48px;border-radius:14px 14px 0 0;background:linear-gradient(#d6d9e6 0,#dfe1ea 2px,#e5e7ef 25%,#f5f6f9 70%,#ffffff 100%);"></div>
<svg style="left:551px;top:1214px;opacity:.85;" width="29" height="30" viewBox="0 0 29 30"><path d="M1 1H22Q26 1 26 5Q26 9 24 12V22Q24 26 28 28H10V20H1Z" fill="#e6edf8" stroke="#aab8d4" stroke-width="1.6" stroke-linejoin="round"/><path d="M1 1V20" stroke="#b8a878" stroke-width="2"/><path d="M18 2V27M2 12H24" stroke="#c4d0e4" stroke-width="1.4"/><circle cx="11" cy="9" r="5.5" fill="#e07878" stroke="#d06060" stroke-width="0.8"/><g opacity="0.85"><g transform="translate(0 16)"><path d="M7 1.2Q8.2 1.2 8.8 2.6L13.3 12.6Q14 15 11.8 15H2.2Q0 15 0.7 12.6L5.2 2.6Q5.8 1.2 7 1.2Z" fill="#f8d98e" stroke="#d4913a" stroke-width="1.4" stroke-linejoin="round"/><path d="M7 4.6V10" stroke="#2a1a08" stroke-width="2"/><circle cx="7" cy="12.4" r="1.2" fill="#2a1a08"/></g></g></svg>
<span class="t" style="left:590.00px;top:1217px;font-size:22px;line-height:28px;color:#7c7c7c;letter-spacing:0.654px;-webkit-text-stroke:0.35px #7c7c7c;">Problems</span>
<span class="t" style="left:713px;top:1212px;font-size:25px;line-height:28px;font-style:italic;font-weight:bold;color:#86a8d4;font-family:'Liberation Serif',serif;">@</span>
<span class="t" style="left:749.50px;top:1217px;font-size:22px;line-height:28px;color:#7c7c7c;letter-spacing:0.343px;-webkit-text-stroke:0.35px #7c7c7c;">Javadoc</span>
<svg style="left:855px;top:1214px;" width="30" height="30" viewBox="0 0 30 30"><path d="M1 1H14L20 7V27H1Z" fill="#eef0f8" stroke="#c8b488" stroke-width="1.8" stroke-linejoin="round"/><path d="M12 15H28" stroke="none"/><path d="M10 23V19H20V15.5L28 21L20 26.5V23Z" fill="#fbeab4" stroke="#d8b070" stroke-width="1.6" stroke-linejoin="round"/></svg>
<span class="t" style="left:858.5px;top:1217px;font-size:17px;line-height:18px;letter-spacing:-1px;color:#8ea6cc;">{=</span>
<span class="t" style="left:895.00px;top:1217px;font-size:22px;line-height:28px;color:#7c7c7c;letter-spacing:0.796px;-webkit-text-stroke:0.35px #7c7c7c;">Declaration</span>
<svg style="left:1035.5px;top:1216px;" width="28" height="27" viewBox="0 0 28 27"><rect x="1.5" y="1.5" width="24" height="19" rx="2" fill="#f4f8fe" stroke="#3a64b8" stroke-width="3"/><rect x="3.6" y="3.6" width="19.8" height="14.8" fill="none" stroke="#8a98b8" stroke-width="1"/><rect x="9" y="21" width="9" height="3" fill="#3a64b8"/><rect x="3" y="23.5" width="21" height="2.6" fill="#3a64b8"/><path d="M6 8.5H15M6 13H20" stroke="#2a3a80" stroke-width="2"/></svg>
<span class="t" style="left:1072.00px;top:1217px;font-size:22px;line-height:28px;color:#000;letter-spacing:0.503px;-webkit-text-stroke:0.35px #000;">Console</span>
<svg style="left:1172px;top:1220px;" width="20" height="20" viewBox="0 0 20 20"><path d="M1 1H5.4L10 4.9L14.6 1H19V5.4L15.1 10L19 14.6V19H14.6L10 15.1L5.4 19H1V14.6L4.9 10L1 5.4Z" fill="#fff" stroke="#000" stroke-width="2" stroke-linejoin="miter"/></svg>
<div style="left:1558px;top:1206px;width:44px;height:44px;background:#dcdcdc;border:1.5px solid #bdbdbd;box-sizing:border-box;"></div>
<div style="left:1602px;top:1206px;width:44px;height:44px;background:#dcdcdc;border:1.5px solid #bdbdbd;box-sizing:border-box;"></div>
<div style="left:1421px;top:1206px;width:1px;height:44px;background:#d0d0d0;"></div>
<div style="left:1653px;top:1206px;width:1px;height:44px;background:#d0d0d0;"></div>
<svg style="left:1294px;top:1218px;" width="23" height="23" viewBox="0 0 23 23"><rect x="1.5" y="1.5" width="20" height="20" rx="3" fill="#f2f2f2" stroke="#dcdcdc" stroke-width="1.6"/><rect x="5" y="5" width="13" height="13" fill="#dadada"/></svg>
<svg style="left:1336px;top:1215px;" width="26" height="26" viewBox="0 0 26 26"><g transform="translate(0 0) scale(1.000)" stroke-linecap="round"><path d="M4.5 4.5L21.5 21.5M21.5 4.5L4.5 21.5" stroke="#555" stroke-width="8.4"/><path d="M4.5 4.5L21.5 21.5M21.5 4.5L4.5 21.5" stroke="#6e6e6e" stroke-width="6.4"/></g></svg>
<svg style="left:1378px;top:1212px;" width="32" height="32" viewBox="0 0 32 32"><g transform="translate(0 0) scale(0.808)" stroke-linecap="round"><path d="M4.5 4.5L21.5 21.5M21.5 4.5L4.5 21.5" stroke="#6a6a6a" stroke-width="8.4"/><path d="M4.5 4.5L21.5 21.5M21.5 4.5L4.5 21.5" stroke="#dcdcdc" stroke-width="6.4"/></g><g transform="translate(8 10) scale(0.846)" stroke-linecap="round"><path d="M4.5 4.5L21.5 21.5M21.5 4.5L4.5 21.5" stroke="#555" stroke-width="8.4"/><path d="M4.5 4.5L21.5 21.5M21.5 4.5L4.5 21.5" stroke="#6e6e6e" stroke-width="6.4"/></g></svg>
<svg style="left:1434px;top:1212px;" width="32" height="32" viewBox="0 0 32 32"><path d="M1 1H14L20 7V27H1Z" fill="url(#gPage)" stroke="#b8a878" stroke-width="1.8" stroke-linejoin="round"/><path d="M4.5 8H13M4.5 12H15M4.5 16H15M4.5 20H12M4.5 24H10" stroke="#4a62a8" stroke-width="1.6"/><g transform="translate(16 17) scale(0.538)" stroke-linecap="round"><path d="M4.5 4.5L21.5 21.5M21.5 4.5L4.5 21.5" stroke="#333" stroke-width="8.4"/><path d="M4.5 4.5L21.5 21.5M21.5 4.5L4.5 21.5" stroke="#555" stroke-width="6.4"/></g></svg>
<svg style="left:1478px;top:1213px;" width="32" height="32" viewBox="0 0 32 32"><rect x="4" y="1" width="25" height="26" fill="#eaf2fc" stroke="#7a96c8" stroke-width="1.8"/><rect x="21" y="2" width="7" height="24" fill="#c8d8f0" stroke="#6a86b8" stroke-width="1.2"/><rect x="23" y="4" width="3" height="3" fill="#2a4a98"/><rect x="23" y="21" width="3" height="3" fill="#2a4a98"/><path d="M5 18V14.5Q5 10.5 9 10.5Q13 10.5 13 14.5V18" fill="none" stroke="#b88a28" stroke-width="2.2"/><rect x="1" y="17" width="16" height="12" rx="1.5" fill="#e8b848" stroke="#a87818" stroke-width="1.4"/><path d="M9 21V25" stroke="#3a2a08" stroke-width="2"/></svg>
<svg style="left:1522px;top:1212px;" width="32" height="32" viewBox="0 0 32 32"><g opacity="0.75"><path d="M1 1H14L20 7V27H1Z" fill="url(#gPage)" stroke="#c8b888" stroke-width="1.8" stroke-linejoin="round"/><path d="M4.5 8H14M4.5 12H13M4.5 16H11M4.5 20H9M4.5 24H9" stroke="#6a82b8" stroke-width="1.6"/><path d="M26 5Q28 5 28 7V17Q28 19 26 19H20V24L11 17.5L20 11V15H24V7Q24 5 26 5Z" fill="#fbeab4" stroke="#d8b070" stroke-width="1.6" stroke-linejoin="round"/></g></svg>
<svg style="left:1565px;top:1213px;" width="32" height="32" viewBox="0 0 32 32"><path d="M10 9L28 22H10Z" fill="#888" opacity="0.5"/><rect x="1.5" y="14" width="11" height="9" rx="1.5" fill="#e8f0fc" stroke="#3a6ac0" stroke-width="1.8"/><rect x="4.0" y="23" width="6" height="3.5" fill="#3a6ac0"/><rect x="0.0" y="26" width="14" height="2.4" fill="#3a6ac0"/><rect x="8" y="1.5" width="21" height="14" fill="#f4f8fe" stroke="#3a6ac0" stroke-width="2"/><path d="M12 6.5H22M12 11H26" stroke="#2a4a98" stroke-width="1.8"/></svg>
<svg style="left:1609px;top:1213px;" width="32" height="32" viewBox="0 0 32 32"><path d="M10 9L28 22H10Z" fill="#888" opacity="0.5"/><rect x="1.5" y="14" width="11" height="9" rx="1.5" fill="#e8f0fc" stroke="#3a6ac0" stroke-width="1.8"/><rect x="4.0" y="23" width="6" height="3.5" fill="#3a6ac0"/><rect x="0.0" y="26" width="14" height="2.4" fill="#3a6ac0"/><rect x="8" y="1.5" width="21" height="14" fill="#f4f8fe" stroke="#3a6ac0" stroke-width="2"/><path d="M11 4L19 13M19 4L11 13" stroke="#d83030" stroke-width="3"/><path d="M22 6.5H26M22 11H26" stroke="#2a4a98" stroke-width="1.8"/></svg>
<svg style="left:1668px;top:1214px;" width="32" height="32" viewBox="0 0 32 32"><rect x="1.5" y="11" width="25" height="17" fill="url(#gWin)" stroke="#8a98b0" stroke-width="1.6"/><rect x="1" y="10" width="26" height="4" fill="#4d8ad0"/><path d="M14 18L20 24" stroke="#888" stroke-width="1.6"/><path d="M13 18L17 14" stroke="#2a3a78" stroke-width="2"/><path d="M17 8Q20 0 26 2Q30 5 27 10Q26 14 22 16Q17 15 15 10Z" fill="#4aa84a" stroke="#2e8a3a" stroke-width="1.4"/></svg>
<svg style="left:1711px;top:1213px;" width="28" height="28" viewBox="0 0 28 28"><rect x="2" y="2" width="23" height="19" rx="2.5" fill="#e4ecf8" stroke="#a8b8dc" stroke-width="2.6"/><rect x="10.5" y="21" width="6" height="3.5" fill="#a8b8dc"/><rect x="6.5" y="24" width="14" height="2.4" fill="#a8b8dc"/><path d="M7 9H16M7 14H20" stroke="#a8b4cc" stroke-width="2"/></svg>
<svg style="left:1747px;top:1226px;" width="10" height="8" viewBox="0 0 10 8"><path d="M0 0H10L5 8Z" fill="#b0b0b0"/></svg>
<svg style="left:1769px;top:1212px;overflow:visible;" width="32" height="32" viewBox="0 0 32 32"><rect x="2" y="7" width="26" height="22" fill="url(#gWin)" stroke="#9c8550" stroke-width="2"/><rect x="1" y="6" width="22" height="4.5" fill="#4d8ad0"/><path d="M8 28Q22 27 24 13" fill="none" stroke="#f3dfa0" stroke-width="2.5"/><path d="M24 1L31 8L24 15L17 8Z" fill="#d2ab45" stroke="#a8841f" stroke-width="1.4" stroke-linejoin="round"/><path d="M24 4V12M20 8H28" stroke="#fffbe8" stroke-width="2.2" stroke-linecap="round"/></svg>
<svg style="left:1806px;top:1225px;" width="10" height="8" viewBox="0 0 10 8"><path d="M0 0H10L5 8Z" fill="#000"/></svg>
<svg style="left:1834px;top:1218px;" width="20" height="8" viewBox="0 0 20 8"><rect x="1" y="1" width="18" height="5.5" fill="#fff" stroke="#000" stroke-width="2"/></svg>
<svg style="left:1878px;top:1218px;" width="20" height="20" viewBox="0 0 20 20"><rect x="1" y="1" width="18" height="17.5" fill="#fff" stroke="#000" stroke-width="2"/><path d="M1 5H19" stroke="#000" stroke-width="2"/></svg>
<span class="t" style="left:550.30px;top:1259px;font-size:22px;line-height:28px;color:#262626;letter-spacing:1.019px;-webkit-text-stroke:0.2px #262626;">&lt;terminated&gt; </span>
<span class="t" style="left:699.00px;top:1259px;font-size:22px;line-height:28px;color:#262626;letter-spacing:0.720px;-webkit-text-stroke:0.2px #262626;">Aufgabe5 </span>
<span class="t" style="left:807.50px;top:1259px;font-size:22px;line-height:28px;color:#262626;letter-spacing:1.269px;-webkit-text-stroke:0.2px #262626;">(1) </span>
<span class="t" style="left:846.00px;top:1259px;font-size:22px;line-height:28px;color:#262626;letter-spacing:0.038px;-webkit-text-stroke:0.2px #262626;">[Java </span>
<span class="t" style="left:908.20px;top:1259px;font-size:22px;line-height:28px;color:#262626;letter-spacing:0.925px;-webkit-text-stroke:0.2px #262626;">Application] </span>
<span class="t" style="left:1040.00px;top:1259px;font-size:22px;line-height:28px;color:#262626;letter-spacing:0.543px;-webkit-text-stroke:0.2px #262626;">/Library/Java/</span>
<span class="t" style="left:1180.30px;top:1259px;font-size:22px;line-height:28px;color:#262626;letter-spacing:0.638px;-webkit-text-stroke:0.2px #262626;">JavaVirtualMachines/</span>
<span class="t" style="left:1404.30px;top:1259px;font-size:22px;line-height:28px;color:#262626;letter-spacing:1.149px;-webkit-text-stroke:0.2px #262626;">jdk1.8.0_181</span>
<span class="t" style="left:1542.00px;top:1259px;font-size:22px;line-height:28px;color:#262626;letter-spacing:0.881px;-webkit-text-stroke:0.2px #262626;">.jdk/Contents/Home/bin/java </span>
<span class="t" style="left:1849.80px;top:1259px;font-size:22px;line-height:28px;color:#262626;letter-spacing:-2.126px;-webkit-text-stroke:0.2px #262626;">(1 </span>
<span class="t" style="left:1877.40px;top:1259px;font-size:22px;line-height:28px;color:#262626;letter-spacing:0.738px;-webkit-text-stroke:0.2px #262626;">Nov</span>
<div style="left:546px;top:1286px;width:1374px;height:2px;background:#dedede;"></div>
<div style="left:554px;top:1289px;width:4px;height:1px;background:#cfcfcf;"></div>
<div style="left:567px;top:1289px;width:5px;height:1px;background:#cfcfcf;"></div>
<span class="t m" style="left:549.5px;top:1296px;font-size:24px;line-height:28px;color:#000;-webkit-text-stroke:0.3px #000;">95</span>
<span class="t m" style="left:549.5px;top:1324px;font-size:24px;line-height:28px;color:#000;-webkit-text-stroke:0.3px #000;">97</span>
<span class="t m" style="left:549.5px;top:1352px;font-size:24px;line-height:28px;color:#000;-webkit-text-stroke:0.3px #000;">99</span>
<div style="left:667px;top:1414px;width:1px;height:44px;background:#cfcfcf;"></div>
<div style="left:875px;top:1414px;width:1px;height:44px;background:#cfcfcf;"></div>
<div style="left:1071px;top:1414px;width:1px;height:44px;background:#cfcfcf;"></div>
<span class="t" style="left:681.00px;top:1423px;font-size:22px;line-height:28px;color:#000;letter-spacing:0.778px;-webkit-text-stroke:0.35px #000;">Writable</span>
<span class="t" style="left:888.00px;top:1423px;font-size:22px;line-height:28px;color:#000;letter-spacing:0.846px;-webkit-text-stroke:0.35px #000;">Smart Insert</span>
<span class="t" style="left:1085.00px;top:1423px;font-size:22px;line-height:28px;color:#000;letter-spacing:1.598px;-webkit-text-stroke:0.35px #000;">11 : 40</span>
<div style="left:1261px;top:1425px;width:3px;height:4px;background:#9a9a9a;"></div>
<div style="left:1261px;top:1434px;width:3px;height:4px;background:#9a9a9a;"></div>
<div style="left:1261px;top:1443px;width:3px;height:4px;background:#9a9a9a;"></div>
<div style="left:1261px;top:1452px;width:3px;height:4px;background:#9a9a9a;"></div>
<svg style="left:1836px;top:1426px;" width="30" height="30" viewBox="0 0 30 30"><defs><linearGradient id="gRss" x1="0" y1="0" x2="0" y2="1"><stop offset="0" stop-color="#f29a48"/><stop offset="1" stop-color="#ea7a20"/></linearGradient></defs><rect x="0.8" y="0.8" width="28.4" height="28.4" rx="5" fill="url(#gRss)" stroke="#f4a868" stroke-width="1.4"/><circle cx="8" cy="22" r="2.6" fill="#fff"/><path d="M5.5 14A10.5 10.5 0 0 1 16 24.5" fill="none" stroke="#fff" stroke-width="3"/><path d="M5.5 7.5A17 17 0 0 1 22.5 24.5" fill="none" stroke="#fff" stroke-width="3"/></svg>
<div style="left:1876px;top:1425px;width:2px;height:2px;background:#ddd7cd;"></div>
<div style="left:1876px;top:1434px;width:2px;height:2px;background:#ddd7cd;"></div>
<div style="left:1876px;top:1443px;width:2px;height:2px;background:#ddd7cd;"></div>
<div style="left:1876px;top:1452px;width:2px;height:2px;background:#ddd7cd;"></div>
<svg style="left:1898px;top:1426px;" width="19" height="30" viewBox="0 0 20 31.5"><defs><radialGradient id="gBulb" cx="0.5" cy="0.75" r="0.75"><stop offset="0" stop-color="#ffffff"/><stop offset="0.45" stop-color="#fff6cc"/><stop offset="1" stop-color="#f8d070"/></radialGradient></defs><path d="M10 1Q18.5 1 19 10Q19 14 15.5 18.5V22H4.5V18.5Q1 14 1 10Q1.5 1 10 1Z" fill="url(#gBulb)" stroke="#f0b030" stroke-width="1.8"/><rect x="5" y="21" width="10" height="6.5" fill="#c8ced8" stroke="#687890" stroke-width="1.4"/><rect x="6.5" y="27.5" width="7" height="3" fill="#3a4a6a"/></svg>
</div></div>
</body></html>
